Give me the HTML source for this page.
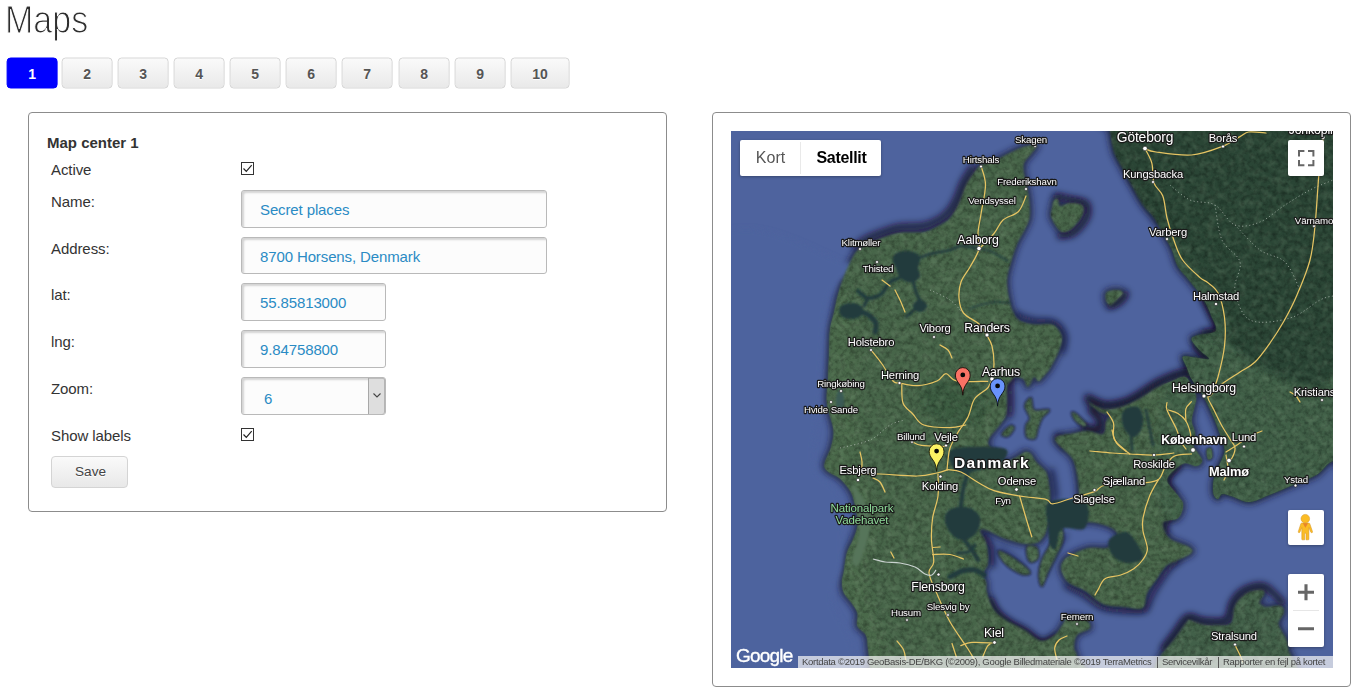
<!DOCTYPE html>
<html lang="da">
<head>
<meta charset="utf-8">
<title>Maps</title>
<style>
html,body{margin:0;padding:0;background:#fff;}
body{width:1365px;height:699px;position:relative;overflow:hidden;font-family:"Liberation Sans",sans-serif;font-size:15px;color:#333;}
.abs{position:absolute;white-space:nowrap;}
h1{position:absolute;left:4.5px;top:-2.5px;margin:0;font-weight:normal;font-size:38px;line-height:44px;color:#2e2e2e;transform-origin:0 0;transform:scaleX(.895);-webkit-text-stroke:1.1px #fff;}
.tab{position:absolute;transform:translate(-.4px,.5px);top:57px;height:29px;width:49px;border:1px solid #d6d6d6;border-radius:4px;background:linear-gradient(#fafafa,#e9e9e9);color:#555;font-weight:bold;font-size:14px;line-height:30px;text-align:center;text-shadow:0 1px 0 #fff;}
.tab.on{background:#0000fe;border-color:#0000fe;color:#fff;text-shadow:none;}
.box{position:absolute;border:1px solid #8c8c8c;border-radius:4px;box-sizing:border-box;}
.lbl{position:absolute;left:51px;font-size:15px;letter-spacing:-.08px;line-height:20px;color:#333;white-space:nowrap;}
.inp{position:absolute;left:241px;height:37px;box-sizing:border-box;border:1px solid #b9b9b9;border-radius:3px;background:#fcfcfc;box-shadow:inset 2px 2px 2px rgba(0,0,0,.16);color:#2a8bc4;font-size:15px;letter-spacing:-.12px;line-height:37px;padding-left:18px;white-space:nowrap;}
.chk{position:absolute;left:241px;width:11px;height:11px;border:1px solid #333;background:#fff;}
.chk svg{position:absolute;left:0;top:0;}
.btn{position:absolute;left:51px;top:456px;width:75px;height:30px;border:1px solid #d4d4d4;border-radius:4px;background:linear-gradient(#fafafa,#e8e8e8);color:#444;font-size:13.6px;line-height:30px;text-align:center;text-indent:2px;text-shadow:0 1px 0 #fff;}
#map{position:absolute;left:731px;top:131px;width:602px;height:537px;overflow:hidden;background:#4e639e;}
.ctl{position:absolute;background:#fff;border-radius:2px;box-shadow:0 1px 3px rgba(0,0,0,.3);}
</style>
</head>
<body>
<h1>Maps</h1>

<div class="tab on" style="left:7px">1</div>
<div class="tab" style="left:62px">2</div>
<div class="tab" style="left:118px">3</div>
<div class="tab" style="left:174px">4</div>
<div class="tab" style="left:230px">5</div>
<div class="tab" style="left:286px">6</div>
<div class="tab" style="left:342px">7</div>
<div class="tab" style="left:399px">8</div>
<div class="tab" style="left:455px">9</div>
<div class="tab" style="left:511px;width:57px">10</div>

<div class="box" style="left:28px;top:112px;width:639px;height:400px"></div>
<div class="abs" style="left:47px;top:132.5px;font-weight:bold;font-size:15px;line-height:20px;color:#333">Map center 1</div>

<div class="lbl" style="top:160px">Active</div>
<div class="chk" style="top:162px"><svg width="11" height="11" viewBox="0 0 11 11"><path d="M1.5 5.5 L4.3 8.3 L9.7 2.2" fill="none" stroke="#222" stroke-width="1.2"/></svg></div>

<div class="lbl" style="top:192px">Name:</div>
<div class="inp" style="top:190px;width:306px;height:38px">Secret places</div>

<div class="lbl" style="top:239px">Address:</div>
<div class="inp" style="top:237px;width:306px">8700 Horsens, Denmark</div>

<div class="lbl" style="top:285px">lat:</div>
<div class="inp" style="top:283px;width:145px;height:38px">55.85813000</div>

<div class="lbl" style="top:332px">lng:</div>
<div class="inp" style="top:330px;width:145px;height:38px">9.84758800</div>

<div class="lbl" style="top:379px">Zoom:</div>
<div class="inp" style="top:377px;width:145px;height:38px;padding-left:22px;line-height:41px">6</div>
<div class="abs" style="left:368px;top:378px;width:16px;height:36px;background:#dedede;border-left:1px solid #a8a8a8;border-radius:0 2px 2px 0;box-shadow:inset -1px 0 0 #b4b4b4,inset 0 1px 0 #bdbdbd"><svg width="16" height="35" viewBox="0 0 16 35"><path d="M4.5 15.5 L8 19 L11.5 15.5" fill="none" stroke="#444" stroke-width="1.1"/></svg></div>

<div class="lbl" style="top:426px">Show labels</div>
<div class="chk" style="top:428px"><svg width="11" height="11" viewBox="0 0 11 11"><path d="M1.5 5.5 L4.3 8.3 L9.7 2.2" fill="none" stroke="#222" stroke-width="1.2"/></svg></div>

<div class="btn">Save</div>

<div class="box" style="left:712px;top:112px;width:639px;height:575px"></div>

<div id="map">
<svg width="602" height="537" viewBox="731 131 602 537" style="position:absolute;left:0;top:0;display:block">
<defs>
<filter id="halo" filterUnits="userSpaceOnUse" x="700" y="100" width="680" height="620"><feGaussianBlur stdDeviation="3.4"/></filter>
<filter id="soft" filterUnits="userSpaceOnUse" x="700" y="100" width="680" height="620"><feGaussianBlur stdDeviation="1.2"/></filter>
<filter id="soft2" filterUnits="userSpaceOnUse" x="700" y="100" width="680" height="620"><feGaussianBlur stdDeviation="2.5"/></filter>
<filter id="soft3" filterUnits="userSpaceOnUse" x="700" y="100" width="680" height="620"><feGaussianBlur stdDeviation="3.3"/></filter>
<filter id="tex" x="0" y="0" width="100%" height="100%">
<feTurbulence type="fractalNoise" baseFrequency="0.22" numOctaves="3" seed="7" result="n"/>
<feColorMatrix in="n" type="matrix" values="0 0 0 0 0  0 0 0 0 0  0 0 0 0 0  1.6 0 0 0 -0.62" result="a"/>
<feComposite in="a" in2="SourceGraphic" operator="in"/>
</filter>
<filter id="tex2" x="0" y="0" width="100%" height="100%">
<feTurbulence type="fractalNoise" baseFrequency="0.13" numOctaves="2" seed="23" result="n"/>
<feColorMatrix in="n" type="matrix" values="0 0 0 0 0.55  0 0 0 0 0.75  0 0 0 0 0.5  0 1.5 0 0 -0.62" result="a"/>
<feComposite in="a" in2="SourceGraphic" operator="in"/>
</filter>
<clipPath id="landclip">
<path d="M1037.0 145.0 C1038.0 146.2 1033.2 151.0 1031.0 154.0 C1028.8 157.0 1025.2 159.7 1024.0 163.0 C1022.8 166.3 1023.5 170.0 1024.0 174.0 C1024.5 178.0 1026.1 182.2 1027.0 187.0 C1027.9 191.8 1029.1 197.8 1029.5 203.0 C1029.9 208.2 1030.4 213.3 1029.5 218.0 C1028.6 222.7 1026.1 226.7 1024.0 231.0 C1021.9 235.3 1019.2 238.8 1017.0 244.0 C1014.8 249.2 1012.7 256.0 1011.0 262.0 C1009.3 268.0 1007.3 274.0 1007.0 280.0 C1006.7 286.0 1008.0 292.7 1009.0 298.0 C1010.0 303.3 1011.2 308.2 1013.0 312.0 C1014.8 315.8 1016.3 318.9 1020.0 321.0 C1023.7 323.1 1029.7 323.9 1035.0 324.5 C1040.3 325.1 1047.8 323.2 1052.0 324.5 C1056.2 325.8 1058.3 329.2 1060.0 332.0 C1061.7 334.8 1062.3 337.5 1062.0 341.0 C1061.7 344.5 1059.4 349.5 1058.0 353.0 C1056.6 356.5 1055.0 359.2 1053.5 362.0 C1052.0 364.8 1050.8 367.5 1049.0 370.0 C1047.2 372.5 1044.8 375.1 1043.0 377.0 C1041.2 378.9 1040.0 381.5 1038.5 381.5 C1037.0 381.5 1035.8 376.1 1034.0 377.0 C1032.2 377.9 1029.8 386.7 1028.0 387.0 C1026.2 387.3 1025.7 380.7 1023.5 379.0 C1021.3 377.3 1017.1 376.7 1015.0 377.0 C1012.9 377.3 1012.3 379.5 1011.0 381.0 C1009.7 382.5 1007.7 382.8 1007.0 386.0 C1006.3 389.2 1007.2 395.2 1007.0 400.0 C1006.8 404.8 1007.3 410.7 1006.0 415.0 C1004.7 419.3 1001.7 422.3 999.0 426.0 C996.3 429.7 991.7 433.7 990.0 437.0 C988.3 440.3 986.8 442.0 989.0 446.0 C991.2 450.0 998.7 459.0 1003.0 461.0 C1007.3 463.0 1011.3 459.5 1015.0 458.0 C1018.7 456.5 1022.3 452.7 1025.0 452.0 C1027.7 451.3 1029.2 452.3 1031.0 454.0 C1032.8 455.7 1033.5 459.0 1036.0 462.0 C1038.5 465.0 1043.8 468.2 1046.0 472.0 C1048.2 475.8 1048.3 480.3 1049.0 485.0 C1049.7 489.7 1050.2 493.2 1050.0 500.0 C1049.8 506.8 1049.7 519.2 1048.0 526.0 C1046.3 532.8 1043.5 538.0 1040.0 541.0 C1036.5 544.0 1031.5 544.0 1027.0 544.0 C1022.5 544.0 1017.3 542.2 1013.0 541.0 C1008.7 539.8 1005.4 538.8 1001.0 537.0 C996.6 535.2 990.0 531.0 986.5 530.0 C983.0 529.0 980.0 528.7 980.0 531.0 C980.0 533.3 985.2 538.7 986.5 544.0 C987.8 549.3 988.6 558.0 988.0 563.0 C987.4 568.0 983.3 570.8 983.0 574.0 C982.7 577.2 985.3 578.8 986.0 582.0 C986.7 585.2 985.7 588.3 987.0 593.0 C988.3 597.7 990.7 605.3 994.0 610.0 C997.3 614.7 1002.0 617.7 1007.0 621.0 C1012.0 624.3 1018.3 626.7 1024.0 630.0 C1029.7 633.3 1035.8 640.2 1041.0 641.0 C1046.2 641.8 1051.3 637.8 1055.0 635.0 C1058.7 632.2 1060.8 627.0 1063.0 624.0 C1065.2 621.0 1064.3 617.8 1068.0 617.0 C1071.7 616.2 1081.3 617.2 1085.0 619.0 C1088.7 620.8 1091.3 625.3 1090.0 628.0 C1088.7 630.7 1079.7 631.7 1077.0 635.0 C1074.3 638.3 1074.0 644.3 1074.0 648.0 C1074.0 651.7 1076.3 650.0 1077.0 657.0 C1077.7 664.0 1112.5 684.5 1078.0 690.0 C1043.5 695.5 904.7 693.7 870.0 690.0 C835.3 686.3 870.3 675.0 870.0 668.0 C869.7 661.0 868.7 653.5 868.0 648.0 C867.3 642.5 867.8 638.7 866.0 635.0 C864.2 631.3 858.9 629.7 857.5 626.0 C856.1 622.3 858.6 617.0 857.5 613.0 C856.4 609.0 853.2 605.3 851.0 602.0 C848.8 598.7 845.5 596.3 844.0 593.0 C842.5 589.7 842.0 585.7 842.0 582.0 C842.0 578.3 843.2 575.8 844.0 571.0 C844.8 566.2 845.5 558.2 847.0 553.0 C848.5 547.8 851.2 544.7 853.0 540.0 C854.8 535.3 857.3 530.5 857.7 525.0 C858.1 519.5 856.6 512.5 855.5 507.0 C854.4 501.5 853.6 496.8 851.0 492.0 C848.4 487.2 844.4 482.6 840.0 478.5 C835.6 474.4 826.2 472.5 824.7 467.4 C823.2 462.2 829.5 453.8 831.0 447.6 C832.5 441.4 834.2 437.4 833.5 430.0 C832.8 422.6 827.9 411.5 827.0 403.0 C826.1 394.5 827.7 386.7 828.0 379.0 C828.3 371.3 828.7 365.2 829.0 357.0 C829.3 348.8 829.2 337.3 830.0 330.0 C830.8 322.7 832.7 318.8 834.0 313.0 C835.3 307.2 836.3 301.2 838.0 295.0 C839.7 288.8 841.2 282.9 844.0 276.0 C846.8 269.1 851.7 258.5 855.0 253.5 C858.3 248.5 860.5 248.2 864.0 246.0 C867.5 243.8 870.3 242.7 876.0 240.5 C881.7 238.3 890.0 234.4 898.0 233.0 C906.0 231.6 917.2 233.2 924.0 232.0 C930.8 230.8 934.7 227.9 939.0 225.6 C943.3 223.3 946.7 221.8 950.0 218.0 C953.3 214.2 956.3 208.5 959.0 203.0 C961.7 197.5 963.4 190.2 966.0 185.0 C968.6 179.8 972.0 175.3 974.5 172.0 C977.0 168.7 977.8 166.8 981.0 165.0 C984.2 163.2 988.8 163.2 994.0 161.0 C999.2 158.8 1006.8 154.4 1012.0 152.0 C1017.2 149.6 1020.8 147.7 1025.0 146.5 C1029.2 145.3 1036.0 143.8 1037.0 145.0Z"/>
<path d="M1054.0 200.0 C1055.0 198.5 1057.0 198.0 1058.0 199.0 C1059.0 200.0 1058.0 205.3 1060.0 206.0 C1062.0 206.7 1066.3 203.2 1070.0 203.0 C1073.7 202.8 1079.8 203.3 1082.0 205.0 C1084.2 206.7 1083.7 210.2 1083.0 213.0 C1082.3 215.8 1080.2 219.2 1078.0 222.0 C1075.8 224.8 1072.7 228.3 1070.0 230.0 C1067.3 231.7 1064.3 232.7 1062.0 232.0 C1059.7 231.3 1057.8 228.7 1056.0 226.0 C1054.2 223.3 1051.7 219.0 1051.0 216.0 C1050.3 213.0 1051.5 210.7 1052.0 208.0 C1052.5 205.3 1053.0 201.5 1054.0 200.0Z"/>
<path d="M1107.0 292.0 C1109.0 290.3 1115.3 289.8 1118.0 290.0 C1120.7 290.2 1123.2 291.3 1123.0 293.0 C1122.8 294.7 1119.2 298.0 1117.0 300.0 C1114.8 302.0 1111.8 305.0 1110.0 305.0 C1108.2 305.0 1106.5 302.2 1106.0 300.0 C1105.5 297.8 1105.0 293.7 1107.0 292.0Z"/>
<path d="M1108.0 110.0 C1149.7 106.5 1318.0 51.5 1360.0 110.0 C1402.0 168.5 1364.5 402.5 1360.0 461.0 C1355.5 519.5 1340.2 458.7 1333.0 461.0 C1325.8 463.3 1323.7 470.6 1317.0 474.6 C1310.3 478.6 1301.0 481.6 1293.0 485.0 C1285.0 488.4 1276.3 492.2 1269.0 495.0 C1261.7 497.8 1255.2 501.8 1249.0 502.0 C1242.8 502.2 1236.0 497.3 1231.5 496.0 C1227.0 494.7 1224.2 493.5 1222.0 494.0 C1219.8 494.5 1219.4 499.0 1218.0 499.0 C1216.6 499.0 1214.2 497.0 1213.5 494.0 C1212.8 491.0 1212.8 485.3 1213.5 481.0 C1214.2 476.7 1216.2 472.8 1218.0 468.0 C1219.8 463.2 1223.8 456.7 1224.5 452.0 C1225.2 447.3 1222.8 443.0 1222.0 440.0 C1221.2 437.0 1221.4 437.8 1220.0 434.0 C1218.6 430.2 1215.7 422.2 1213.5 417.0 C1211.3 411.8 1208.8 406.8 1207.0 403.0 C1205.2 399.2 1205.1 398.5 1202.5 394.5 C1199.9 390.5 1194.1 383.4 1191.5 379.0 C1188.9 374.6 1188.5 371.7 1187.0 368.0 C1185.5 364.3 1181.8 358.8 1182.6 357.0 C1183.3 355.2 1187.1 356.7 1191.5 357.0 C1195.9 357.3 1207.6 360.1 1209.0 359.0 C1210.4 357.9 1202.9 353.8 1200.0 350.5 C1197.1 347.2 1191.8 342.1 1191.5 339.5 C1191.2 336.9 1194.0 336.4 1198.0 335.0 C1202.0 333.6 1213.5 334.3 1215.7 331.0 C1217.9 327.7 1213.2 320.6 1211.0 315.0 C1208.8 309.4 1206.2 303.4 1202.5 297.6 C1198.8 291.8 1193.1 285.2 1189.0 280.0 C1184.9 274.8 1180.9 271.8 1178.0 266.6 C1175.1 261.4 1174.1 254.5 1171.6 249.0 C1169.1 243.5 1165.9 238.7 1163.0 233.5 C1160.1 228.3 1157.3 222.8 1154.0 218.0 C1150.7 213.2 1146.3 209.8 1143.0 205.0 C1139.7 200.2 1137.3 195.4 1134.0 189.5 C1130.7 183.6 1126.3 175.8 1123.0 169.6 C1119.7 163.3 1116.2 158.4 1114.0 152.0 C1111.8 145.6 1111.0 138.0 1110.0 131.0 C1109.0 124.0 1066.3 113.5 1108.0 110.0Z"/>
<path d="M1088.0 402.0 C1088.5 401.5 1097.5 408.2 1103.0 409.0 C1108.5 409.8 1115.0 408.7 1121.0 407.0 C1127.0 405.3 1133.2 402.2 1139.0 399.0 C1144.8 395.8 1150.5 391.0 1156.0 388.0 C1161.5 385.0 1167.2 382.8 1172.0 381.0 C1176.8 379.2 1181.8 376.2 1185.0 377.0 C1188.2 377.8 1189.7 382.7 1191.5 386.0 C1193.3 389.3 1195.6 393.3 1196.0 397.0 C1196.4 400.7 1194.8 404.0 1194.0 408.0 C1193.2 412.0 1191.3 416.7 1191.5 421.0 C1191.7 425.3 1194.8 430.0 1195.0 434.0 C1195.2 438.0 1192.7 442.0 1193.0 445.0 C1193.3 448.0 1195.5 449.3 1197.0 452.0 C1198.5 454.7 1202.2 458.7 1202.0 461.0 C1201.8 463.3 1198.8 465.7 1196.0 466.0 C1193.2 466.3 1188.7 462.3 1185.0 463.0 C1181.3 463.7 1177.0 467.0 1174.0 470.0 C1171.0 473.0 1166.3 476.7 1167.0 481.0 C1167.7 485.3 1175.3 492.0 1178.0 496.0 C1180.7 500.0 1183.0 501.3 1183.0 505.0 C1183.0 508.7 1181.3 515.1 1178.0 518.0 C1174.7 520.9 1164.5 519.2 1163.0 522.5 C1161.5 525.8 1164.7 533.9 1169.0 538.0 C1173.3 542.1 1185.2 544.5 1189.0 547.0 C1192.8 549.5 1193.3 550.8 1191.5 553.0 C1189.7 555.2 1182.2 557.8 1178.0 560.0 C1173.8 562.2 1169.7 562.7 1166.0 566.0 C1162.3 569.3 1159.2 575.5 1156.0 580.0 C1152.8 584.5 1149.2 588.3 1147.0 593.0 C1144.8 597.7 1146.3 605.7 1142.6 608.0 C1138.9 610.3 1131.6 607.7 1125.0 607.0 C1118.4 606.3 1109.6 606.7 1103.0 604.0 C1096.4 601.3 1091.3 594.7 1085.5 591.0 C1079.7 587.3 1072.1 585.7 1068.0 582.0 C1063.9 578.3 1061.7 572.7 1061.0 569.0 C1060.3 565.3 1062.5 562.2 1064.0 560.0 C1065.5 557.8 1065.9 557.5 1070.0 555.5 C1074.1 553.5 1082.5 549.2 1088.7 548.0 C1094.9 546.8 1102.5 549.0 1107.0 548.0 C1111.5 547.0 1114.2 544.2 1116.0 542.0 C1117.8 539.8 1118.7 537.3 1118.0 535.0 C1117.3 532.7 1115.5 530.0 1112.0 528.0 C1108.5 526.0 1101.8 524.0 1097.0 523.0 C1092.2 522.0 1086.2 521.8 1083.0 522.0 C1079.8 522.2 1079.0 525.2 1078.0 524.0 C1077.0 522.8 1076.8 520.0 1077.0 515.0 C1077.2 510.0 1079.0 500.8 1079.0 494.0 C1079.0 487.2 1078.2 480.0 1077.0 474.0 C1075.8 468.0 1075.7 463.8 1072.0 458.0 C1068.3 452.2 1054.5 443.2 1055.0 439.0 C1055.5 434.8 1069.5 434.3 1075.0 433.0 C1080.5 431.7 1083.3 430.8 1088.0 431.0 C1092.7 431.2 1100.0 435.5 1103.0 434.0 C1106.0 432.5 1104.8 425.2 1106.0 422.0 C1107.2 418.8 1111.0 416.7 1110.0 415.0 C1109.0 413.3 1103.7 414.2 1100.0 412.0 C1096.3 409.8 1087.5 402.5 1088.0 402.0Z"/>
<path d="M1061.0 526.0 C1062.2 527.3 1063.8 535.0 1063.0 540.0 C1062.2 545.0 1058.5 550.7 1056.0 556.0 C1053.5 561.3 1050.3 567.0 1048.0 572.0 C1045.7 577.0 1043.5 585.5 1042.0 586.0 C1040.5 586.5 1039.0 579.3 1039.0 575.0 C1039.0 570.7 1040.2 565.0 1042.0 560.0 C1043.8 555.0 1047.7 549.7 1050.0 545.0 C1052.3 540.3 1054.2 535.2 1056.0 532.0 C1057.8 528.8 1059.8 524.7 1061.0 526.0Z"/>
<path d="M1028.0 546.0 C1029.7 544.8 1035.3 546.0 1037.0 548.0 C1038.7 550.0 1039.0 555.7 1038.0 558.0 C1037.0 560.3 1032.8 562.5 1031.0 562.0 C1029.2 561.5 1027.5 557.7 1027.0 555.0 C1026.5 552.3 1026.3 547.2 1028.0 546.0Z"/>
<path d="M999.0 551.0 C1000.5 550.7 1005.8 553.5 1010.0 556.0 C1014.2 558.5 1020.7 563.2 1024.0 566.0 C1027.3 568.8 1030.3 571.7 1030.0 573.0 C1029.7 574.3 1025.7 575.2 1022.0 574.0 C1018.3 572.8 1011.5 568.7 1008.0 566.0 C1004.5 563.3 1002.5 560.5 1001.0 558.0 C999.5 555.5 997.5 551.3 999.0 551.0Z"/>
<path d="M1031.0 398.0 C1032.5 398.7 1031.0 408.0 1034.0 410.0 C1037.0 412.0 1047.7 408.7 1049.0 410.0 C1050.3 411.3 1043.8 415.0 1042.0 418.0 C1040.2 421.0 1039.2 424.7 1038.0 428.0 C1036.8 431.3 1036.8 436.5 1035.0 438.0 C1033.2 439.5 1028.5 439.0 1027.0 437.0 C1025.5 435.0 1025.5 429.2 1026.0 426.0 C1026.5 422.8 1030.2 421.3 1030.0 418.0 C1029.8 414.7 1024.8 409.3 1025.0 406.0 C1025.2 402.7 1029.5 397.3 1031.0 398.0Z"/>
<path d="M1072.0 413.0 C1072.2 412.0 1073.7 412.2 1076.0 414.0 C1078.3 415.8 1084.8 422.0 1086.0 424.0 C1087.2 426.0 1084.8 426.7 1083.0 426.0 C1081.2 425.3 1076.8 422.2 1075.0 420.0 C1073.2 417.8 1071.8 414.0 1072.0 413.0Z"/>
<path d="M1002.0 434.0 C1002.3 432.3 1008.0 427.0 1010.0 426.0 C1012.0 425.0 1014.3 426.3 1014.0 428.0 C1013.7 429.7 1010.0 435.0 1008.0 436.0 C1006.0 437.0 1001.7 435.7 1002.0 434.0Z"/>
<path d="M1207.0 450.0 C1207.5 448.3 1210.2 447.8 1211.0 449.0 C1211.8 450.2 1212.5 455.3 1212.0 457.0 C1211.5 458.7 1208.8 460.2 1208.0 459.0 C1207.2 457.8 1206.5 451.7 1207.0 450.0Z"/>
<path d="M1155.0 690.0 C1132.5 686.3 1154.1 673.7 1155.0 668.0 C1155.9 662.3 1157.2 660.9 1160.5 656.0 C1163.8 651.1 1170.2 644.5 1174.6 638.7 C1179.0 632.9 1184.4 624.5 1187.0 621.4 C1189.6 618.3 1187.3 619.5 1190.0 620.0 C1192.7 620.5 1198.2 623.7 1203.0 624.5 C1207.8 625.3 1214.0 625.2 1218.7 625.0 C1223.4 624.8 1228.4 626.0 1231.0 623.0 C1233.6 620.0 1232.8 611.2 1234.4 607.0 C1236.0 602.8 1238.1 600.4 1240.7 597.8 C1243.3 595.2 1246.3 592.8 1250.0 591.5 C1253.7 590.2 1260.4 589.5 1262.7 590.0 C1265.0 590.5 1264.5 592.5 1264.0 594.6 C1263.5 596.7 1259.3 600.4 1259.6 602.5 C1259.9 604.6 1262.5 606.5 1265.9 607.0 C1269.3 607.5 1277.0 604.8 1280.0 605.6 C1283.0 606.4 1284.2 609.1 1284.0 612.0 C1283.8 614.9 1278.9 619.9 1278.5 623.0 C1278.1 626.1 1280.3 628.2 1281.6 630.8 C1282.8 633.4 1284.9 635.8 1286.0 638.7 C1287.1 641.6 1287.3 639.5 1288.0 648.0 C1288.7 656.5 1312.2 683.0 1290.0 690.0 C1267.8 697.0 1177.5 693.7 1155.0 690.0Z"/>
</clipPath></defs>
<rect x="731" y="131" width="602" height="537" fill="#4e639e"/>
<g filter="url(#halo)" fill="#15142e" stroke="#15142e" stroke-width="5.5" stroke-linejoin="round" opacity=".72">
<path d="M1037.0 145.0 C1038.0 146.2 1033.2 151.0 1031.0 154.0 C1028.8 157.0 1025.2 159.7 1024.0 163.0 C1022.8 166.3 1023.5 170.0 1024.0 174.0 C1024.5 178.0 1026.1 182.2 1027.0 187.0 C1027.9 191.8 1029.1 197.8 1029.5 203.0 C1029.9 208.2 1030.4 213.3 1029.5 218.0 C1028.6 222.7 1026.1 226.7 1024.0 231.0 C1021.9 235.3 1019.2 238.8 1017.0 244.0 C1014.8 249.2 1012.7 256.0 1011.0 262.0 C1009.3 268.0 1007.3 274.0 1007.0 280.0 C1006.7 286.0 1008.0 292.7 1009.0 298.0 C1010.0 303.3 1011.2 308.2 1013.0 312.0 C1014.8 315.8 1016.3 318.9 1020.0 321.0 C1023.7 323.1 1029.7 323.9 1035.0 324.5 C1040.3 325.1 1047.8 323.2 1052.0 324.5 C1056.2 325.8 1058.3 329.2 1060.0 332.0 C1061.7 334.8 1062.3 337.5 1062.0 341.0 C1061.7 344.5 1059.4 349.5 1058.0 353.0 C1056.6 356.5 1055.0 359.2 1053.5 362.0 C1052.0 364.8 1050.8 367.5 1049.0 370.0 C1047.2 372.5 1044.8 375.1 1043.0 377.0 C1041.2 378.9 1040.0 381.5 1038.5 381.5 C1037.0 381.5 1035.8 376.1 1034.0 377.0 C1032.2 377.9 1029.8 386.7 1028.0 387.0 C1026.2 387.3 1025.7 380.7 1023.5 379.0 C1021.3 377.3 1017.1 376.7 1015.0 377.0 C1012.9 377.3 1012.3 379.5 1011.0 381.0 C1009.7 382.5 1007.7 382.8 1007.0 386.0 C1006.3 389.2 1007.2 395.2 1007.0 400.0 C1006.8 404.8 1007.3 410.7 1006.0 415.0 C1004.7 419.3 1001.7 422.3 999.0 426.0 C996.3 429.7 991.7 433.7 990.0 437.0 C988.3 440.3 986.8 442.0 989.0 446.0 C991.2 450.0 998.7 459.0 1003.0 461.0 C1007.3 463.0 1011.3 459.5 1015.0 458.0 C1018.7 456.5 1022.3 452.7 1025.0 452.0 C1027.7 451.3 1029.2 452.3 1031.0 454.0 C1032.8 455.7 1033.5 459.0 1036.0 462.0 C1038.5 465.0 1043.8 468.2 1046.0 472.0 C1048.2 475.8 1048.3 480.3 1049.0 485.0 C1049.7 489.7 1050.2 493.2 1050.0 500.0 C1049.8 506.8 1049.7 519.2 1048.0 526.0 C1046.3 532.8 1043.5 538.0 1040.0 541.0 C1036.5 544.0 1031.5 544.0 1027.0 544.0 C1022.5 544.0 1017.3 542.2 1013.0 541.0 C1008.7 539.8 1005.4 538.8 1001.0 537.0 C996.6 535.2 990.0 531.0 986.5 530.0 C983.0 529.0 980.0 528.7 980.0 531.0 C980.0 533.3 985.2 538.7 986.5 544.0 C987.8 549.3 988.6 558.0 988.0 563.0 C987.4 568.0 983.3 570.8 983.0 574.0 C982.7 577.2 985.3 578.8 986.0 582.0 C986.7 585.2 985.7 588.3 987.0 593.0 C988.3 597.7 990.7 605.3 994.0 610.0 C997.3 614.7 1002.0 617.7 1007.0 621.0 C1012.0 624.3 1018.3 626.7 1024.0 630.0 C1029.7 633.3 1035.8 640.2 1041.0 641.0 C1046.2 641.8 1051.3 637.8 1055.0 635.0 C1058.7 632.2 1060.8 627.0 1063.0 624.0 C1065.2 621.0 1064.3 617.8 1068.0 617.0 C1071.7 616.2 1081.3 617.2 1085.0 619.0 C1088.7 620.8 1091.3 625.3 1090.0 628.0 C1088.7 630.7 1079.7 631.7 1077.0 635.0 C1074.3 638.3 1074.0 644.3 1074.0 648.0 C1074.0 651.7 1076.3 650.0 1077.0 657.0 C1077.7 664.0 1112.5 684.5 1078.0 690.0 C1043.5 695.5 904.7 693.7 870.0 690.0 C835.3 686.3 870.3 675.0 870.0 668.0 C869.7 661.0 868.7 653.5 868.0 648.0 C867.3 642.5 867.8 638.7 866.0 635.0 C864.2 631.3 858.9 629.7 857.5 626.0 C856.1 622.3 858.6 617.0 857.5 613.0 C856.4 609.0 853.2 605.3 851.0 602.0 C848.8 598.7 845.5 596.3 844.0 593.0 C842.5 589.7 842.0 585.7 842.0 582.0 C842.0 578.3 843.2 575.8 844.0 571.0 C844.8 566.2 845.5 558.2 847.0 553.0 C848.5 547.8 851.2 544.7 853.0 540.0 C854.8 535.3 857.3 530.5 857.7 525.0 C858.1 519.5 856.6 512.5 855.5 507.0 C854.4 501.5 853.6 496.8 851.0 492.0 C848.4 487.2 844.4 482.6 840.0 478.5 C835.6 474.4 826.2 472.5 824.7 467.4 C823.2 462.2 829.5 453.8 831.0 447.6 C832.5 441.4 834.2 437.4 833.5 430.0 C832.8 422.6 827.9 411.5 827.0 403.0 C826.1 394.5 827.7 386.7 828.0 379.0 C828.3 371.3 828.7 365.2 829.0 357.0 C829.3 348.8 829.2 337.3 830.0 330.0 C830.8 322.7 832.7 318.8 834.0 313.0 C835.3 307.2 836.3 301.2 838.0 295.0 C839.7 288.8 841.2 282.9 844.0 276.0 C846.8 269.1 851.7 258.5 855.0 253.5 C858.3 248.5 860.5 248.2 864.0 246.0 C867.5 243.8 870.3 242.7 876.0 240.5 C881.7 238.3 890.0 234.4 898.0 233.0 C906.0 231.6 917.2 233.2 924.0 232.0 C930.8 230.8 934.7 227.9 939.0 225.6 C943.3 223.3 946.7 221.8 950.0 218.0 C953.3 214.2 956.3 208.5 959.0 203.0 C961.7 197.5 963.4 190.2 966.0 185.0 C968.6 179.8 972.0 175.3 974.5 172.0 C977.0 168.7 977.8 166.8 981.0 165.0 C984.2 163.2 988.8 163.2 994.0 161.0 C999.2 158.8 1006.8 154.4 1012.0 152.0 C1017.2 149.6 1020.8 147.7 1025.0 146.5 C1029.2 145.3 1036.0 143.8 1037.0 145.0Z"/>
<path d="M1054.0 200.0 C1055.0 198.5 1057.0 198.0 1058.0 199.0 C1059.0 200.0 1058.0 205.3 1060.0 206.0 C1062.0 206.7 1066.3 203.2 1070.0 203.0 C1073.7 202.8 1079.8 203.3 1082.0 205.0 C1084.2 206.7 1083.7 210.2 1083.0 213.0 C1082.3 215.8 1080.2 219.2 1078.0 222.0 C1075.8 224.8 1072.7 228.3 1070.0 230.0 C1067.3 231.7 1064.3 232.7 1062.0 232.0 C1059.7 231.3 1057.8 228.7 1056.0 226.0 C1054.2 223.3 1051.7 219.0 1051.0 216.0 C1050.3 213.0 1051.5 210.7 1052.0 208.0 C1052.5 205.3 1053.0 201.5 1054.0 200.0Z"/>
<path d="M1107.0 292.0 C1109.0 290.3 1115.3 289.8 1118.0 290.0 C1120.7 290.2 1123.2 291.3 1123.0 293.0 C1122.8 294.7 1119.2 298.0 1117.0 300.0 C1114.8 302.0 1111.8 305.0 1110.0 305.0 C1108.2 305.0 1106.5 302.2 1106.0 300.0 C1105.5 297.8 1105.0 293.7 1107.0 292.0Z"/>
<path d="M1108.0 110.0 C1149.7 106.5 1318.0 51.5 1360.0 110.0 C1402.0 168.5 1364.5 402.5 1360.0 461.0 C1355.5 519.5 1340.2 458.7 1333.0 461.0 C1325.8 463.3 1323.7 470.6 1317.0 474.6 C1310.3 478.6 1301.0 481.6 1293.0 485.0 C1285.0 488.4 1276.3 492.2 1269.0 495.0 C1261.7 497.8 1255.2 501.8 1249.0 502.0 C1242.8 502.2 1236.0 497.3 1231.5 496.0 C1227.0 494.7 1224.2 493.5 1222.0 494.0 C1219.8 494.5 1219.4 499.0 1218.0 499.0 C1216.6 499.0 1214.2 497.0 1213.5 494.0 C1212.8 491.0 1212.8 485.3 1213.5 481.0 C1214.2 476.7 1216.2 472.8 1218.0 468.0 C1219.8 463.2 1223.8 456.7 1224.5 452.0 C1225.2 447.3 1222.8 443.0 1222.0 440.0 C1221.2 437.0 1221.4 437.8 1220.0 434.0 C1218.6 430.2 1215.7 422.2 1213.5 417.0 C1211.3 411.8 1208.8 406.8 1207.0 403.0 C1205.2 399.2 1205.1 398.5 1202.5 394.5 C1199.9 390.5 1194.1 383.4 1191.5 379.0 C1188.9 374.6 1188.5 371.7 1187.0 368.0 C1185.5 364.3 1181.8 358.8 1182.6 357.0 C1183.3 355.2 1187.1 356.7 1191.5 357.0 C1195.9 357.3 1207.6 360.1 1209.0 359.0 C1210.4 357.9 1202.9 353.8 1200.0 350.5 C1197.1 347.2 1191.8 342.1 1191.5 339.5 C1191.2 336.9 1194.0 336.4 1198.0 335.0 C1202.0 333.6 1213.5 334.3 1215.7 331.0 C1217.9 327.7 1213.2 320.6 1211.0 315.0 C1208.8 309.4 1206.2 303.4 1202.5 297.6 C1198.8 291.8 1193.1 285.2 1189.0 280.0 C1184.9 274.8 1180.9 271.8 1178.0 266.6 C1175.1 261.4 1174.1 254.5 1171.6 249.0 C1169.1 243.5 1165.9 238.7 1163.0 233.5 C1160.1 228.3 1157.3 222.8 1154.0 218.0 C1150.7 213.2 1146.3 209.8 1143.0 205.0 C1139.7 200.2 1137.3 195.4 1134.0 189.5 C1130.7 183.6 1126.3 175.8 1123.0 169.6 C1119.7 163.3 1116.2 158.4 1114.0 152.0 C1111.8 145.6 1111.0 138.0 1110.0 131.0 C1109.0 124.0 1066.3 113.5 1108.0 110.0Z"/>
<path d="M1088.0 402.0 C1088.5 401.5 1097.5 408.2 1103.0 409.0 C1108.5 409.8 1115.0 408.7 1121.0 407.0 C1127.0 405.3 1133.2 402.2 1139.0 399.0 C1144.8 395.8 1150.5 391.0 1156.0 388.0 C1161.5 385.0 1167.2 382.8 1172.0 381.0 C1176.8 379.2 1181.8 376.2 1185.0 377.0 C1188.2 377.8 1189.7 382.7 1191.5 386.0 C1193.3 389.3 1195.6 393.3 1196.0 397.0 C1196.4 400.7 1194.8 404.0 1194.0 408.0 C1193.2 412.0 1191.3 416.7 1191.5 421.0 C1191.7 425.3 1194.8 430.0 1195.0 434.0 C1195.2 438.0 1192.7 442.0 1193.0 445.0 C1193.3 448.0 1195.5 449.3 1197.0 452.0 C1198.5 454.7 1202.2 458.7 1202.0 461.0 C1201.8 463.3 1198.8 465.7 1196.0 466.0 C1193.2 466.3 1188.7 462.3 1185.0 463.0 C1181.3 463.7 1177.0 467.0 1174.0 470.0 C1171.0 473.0 1166.3 476.7 1167.0 481.0 C1167.7 485.3 1175.3 492.0 1178.0 496.0 C1180.7 500.0 1183.0 501.3 1183.0 505.0 C1183.0 508.7 1181.3 515.1 1178.0 518.0 C1174.7 520.9 1164.5 519.2 1163.0 522.5 C1161.5 525.8 1164.7 533.9 1169.0 538.0 C1173.3 542.1 1185.2 544.5 1189.0 547.0 C1192.8 549.5 1193.3 550.8 1191.5 553.0 C1189.7 555.2 1182.2 557.8 1178.0 560.0 C1173.8 562.2 1169.7 562.7 1166.0 566.0 C1162.3 569.3 1159.2 575.5 1156.0 580.0 C1152.8 584.5 1149.2 588.3 1147.0 593.0 C1144.8 597.7 1146.3 605.7 1142.6 608.0 C1138.9 610.3 1131.6 607.7 1125.0 607.0 C1118.4 606.3 1109.6 606.7 1103.0 604.0 C1096.4 601.3 1091.3 594.7 1085.5 591.0 C1079.7 587.3 1072.1 585.7 1068.0 582.0 C1063.9 578.3 1061.7 572.7 1061.0 569.0 C1060.3 565.3 1062.5 562.2 1064.0 560.0 C1065.5 557.8 1065.9 557.5 1070.0 555.5 C1074.1 553.5 1082.5 549.2 1088.7 548.0 C1094.9 546.8 1102.5 549.0 1107.0 548.0 C1111.5 547.0 1114.2 544.2 1116.0 542.0 C1117.8 539.8 1118.7 537.3 1118.0 535.0 C1117.3 532.7 1115.5 530.0 1112.0 528.0 C1108.5 526.0 1101.8 524.0 1097.0 523.0 C1092.2 522.0 1086.2 521.8 1083.0 522.0 C1079.8 522.2 1079.0 525.2 1078.0 524.0 C1077.0 522.8 1076.8 520.0 1077.0 515.0 C1077.2 510.0 1079.0 500.8 1079.0 494.0 C1079.0 487.2 1078.2 480.0 1077.0 474.0 C1075.8 468.0 1075.7 463.8 1072.0 458.0 C1068.3 452.2 1054.5 443.2 1055.0 439.0 C1055.5 434.8 1069.5 434.3 1075.0 433.0 C1080.5 431.7 1083.3 430.8 1088.0 431.0 C1092.7 431.2 1100.0 435.5 1103.0 434.0 C1106.0 432.5 1104.8 425.2 1106.0 422.0 C1107.2 418.8 1111.0 416.7 1110.0 415.0 C1109.0 413.3 1103.7 414.2 1100.0 412.0 C1096.3 409.8 1087.5 402.5 1088.0 402.0Z"/>
<path d="M1155.0 690.0 C1132.5 686.3 1154.1 673.7 1155.0 668.0 C1155.9 662.3 1157.2 660.9 1160.5 656.0 C1163.8 651.1 1170.2 644.5 1174.6 638.7 C1179.0 632.9 1184.4 624.5 1187.0 621.4 C1189.6 618.3 1187.3 619.5 1190.0 620.0 C1192.7 620.5 1198.2 623.7 1203.0 624.5 C1207.8 625.3 1214.0 625.2 1218.7 625.0 C1223.4 624.8 1228.4 626.0 1231.0 623.0 C1233.6 620.0 1232.8 611.2 1234.4 607.0 C1236.0 602.8 1238.1 600.4 1240.7 597.8 C1243.3 595.2 1246.3 592.8 1250.0 591.5 C1253.7 590.2 1260.4 589.5 1262.7 590.0 C1265.0 590.5 1264.5 592.5 1264.0 594.6 C1263.5 596.7 1259.3 600.4 1259.6 602.5 C1259.9 604.6 1262.5 606.5 1265.9 607.0 C1269.3 607.5 1277.0 604.8 1280.0 605.6 C1283.0 606.4 1284.2 609.1 1284.0 612.0 C1283.8 614.9 1278.9 619.9 1278.5 623.0 C1278.1 626.1 1280.3 628.2 1281.6 630.8 C1282.8 633.4 1284.9 635.8 1286.0 638.7 C1287.1 641.6 1287.3 639.5 1288.0 648.0 C1288.7 656.5 1312.2 683.0 1290.0 690.0 C1267.8 697.0 1177.5 693.7 1155.0 690.0Z"/>
</g>
<g filter="url(#soft)" fill="#15142e" stroke="#15142e" stroke-width="3" stroke-linejoin="round" opacity=".6">
<path d="M1061.0 526.0 C1062.2 527.3 1063.8 535.0 1063.0 540.0 C1062.2 545.0 1058.5 550.7 1056.0 556.0 C1053.5 561.3 1050.3 567.0 1048.0 572.0 C1045.7 577.0 1043.5 585.5 1042.0 586.0 C1040.5 586.5 1039.0 579.3 1039.0 575.0 C1039.0 570.7 1040.2 565.0 1042.0 560.0 C1043.8 555.0 1047.7 549.7 1050.0 545.0 C1052.3 540.3 1054.2 535.2 1056.0 532.0 C1057.8 528.8 1059.8 524.7 1061.0 526.0Z"/>
<path d="M1028.0 546.0 C1029.7 544.8 1035.3 546.0 1037.0 548.0 C1038.7 550.0 1039.0 555.7 1038.0 558.0 C1037.0 560.3 1032.8 562.5 1031.0 562.0 C1029.2 561.5 1027.5 557.7 1027.0 555.0 C1026.5 552.3 1026.3 547.2 1028.0 546.0Z"/>
<path d="M999.0 551.0 C1000.5 550.7 1005.8 553.5 1010.0 556.0 C1014.2 558.5 1020.7 563.2 1024.0 566.0 C1027.3 568.8 1030.3 571.7 1030.0 573.0 C1029.7 574.3 1025.7 575.2 1022.0 574.0 C1018.3 572.8 1011.5 568.7 1008.0 566.0 C1004.5 563.3 1002.5 560.5 1001.0 558.0 C999.5 555.5 997.5 551.3 999.0 551.0Z"/>
<path d="M1031.0 398.0 C1032.5 398.7 1031.0 408.0 1034.0 410.0 C1037.0 412.0 1047.7 408.7 1049.0 410.0 C1050.3 411.3 1043.8 415.0 1042.0 418.0 C1040.2 421.0 1039.2 424.7 1038.0 428.0 C1036.8 431.3 1036.8 436.5 1035.0 438.0 C1033.2 439.5 1028.5 439.0 1027.0 437.0 C1025.5 435.0 1025.5 429.2 1026.0 426.0 C1026.5 422.8 1030.2 421.3 1030.0 418.0 C1029.8 414.7 1024.8 409.3 1025.0 406.0 C1025.2 402.7 1029.5 397.3 1031.0 398.0Z"/>
<path d="M1072.0 413.0 C1072.2 412.0 1073.7 412.2 1076.0 414.0 C1078.3 415.8 1084.8 422.0 1086.0 424.0 C1087.2 426.0 1084.8 426.7 1083.0 426.0 C1081.2 425.3 1076.8 422.2 1075.0 420.0 C1073.2 417.8 1071.8 414.0 1072.0 413.0Z"/>
<path d="M1002.0 434.0 C1002.3 432.3 1008.0 427.0 1010.0 426.0 C1012.0 425.0 1014.3 426.3 1014.0 428.0 C1013.7 429.7 1010.0 435.0 1008.0 436.0 C1006.0 437.0 1001.7 435.7 1002.0 434.0Z"/>
<path d="M1207.0 450.0 C1207.5 448.3 1210.2 447.8 1211.0 449.0 C1211.8 450.2 1212.5 455.3 1212.0 457.0 C1211.5 458.7 1208.8 460.2 1208.0 459.0 C1207.2 457.8 1206.5 451.7 1207.0 450.0Z"/>
</g>
<g filter="url(#soft3)" fill="none" stroke="#150c24" stroke-linecap="round">
<path d="M1088.0 398.0 C1090.8 399.2 1098.8 404.3 1105.0 405.0 C1111.2 405.7 1119.2 403.8 1125.0 402.0 C1130.8 400.2 1134.7 397.2 1140.0 394.0 C1145.3 390.8 1151.7 386.0 1157.0 383.0 C1162.3 380.0 1167.2 377.8 1172.0 376.0 C1176.8 374.2 1183.7 372.7 1186.0 372.0" stroke-width="7.2" opacity="0.95"/>
<path d="M1092.0 410.0 C1093.3 411.7 1099.0 416.7 1100.0 420.0 C1101.0 423.3 1100.5 428.7 1098.0 430.0 C1095.5 431.3 1087.2 428.3 1085.0 428.0" stroke-width="8.0" opacity="0.9"/>
<path d="M1206.0 300.0 C1207.3 302.5 1211.8 310.0 1214.0 315.0 C1216.2 320.0 1220.5 327.0 1219.0 330.0 C1217.5 333.0 1207.3 332.5 1205.0 333.0" stroke-width="7.2" opacity="0.95"/>
<path d="M1196.0 346.0 C1197.5 347.5 1202.3 352.7 1205.0 355.0 C1207.7 357.3 1210.8 359.2 1212.0 360.0" stroke-width="6.4" opacity="0.95"/>
<path d="M1186.0 362.0 C1186.7 364.2 1188.0 370.7 1190.0 375.0 C1192.0 379.3 1196.7 385.8 1198.0 388.0" stroke-width="4.0" opacity="0.7"/>
<path d="M1178.0 466.0 C1176.7 467.3 1172.0 471.0 1170.0 474.0 C1168.0 477.0 1165.7 481.0 1166.0 484.0 C1166.3 487.0 1171.0 490.7 1172.0 492.0" stroke-width="6.4" opacity="0.95"/>
<path d="M1170.0 518.0 C1169.0 519.0 1164.7 521.7 1164.0 524.0 C1163.3 526.3 1165.7 530.7 1166.0 532.0" stroke-width="5.6" opacity="0.9"/>
<path d="M1178.0 560.0 C1176.7 561.3 1173.0 564.3 1170.0 568.0 C1167.0 571.7 1163.0 577.3 1160.0 582.0 C1157.0 586.7 1154.3 591.3 1152.0 596.0 C1149.7 600.7 1147.0 607.7 1146.0 610.0" stroke-width="4.8" opacity="0.7"/>
<path d="M1066.0 586.0 C1069.2 587.7 1078.8 592.3 1085.0 596.0 C1091.2 599.7 1096.3 605.5 1103.0 608.0 C1109.7 610.5 1118.5 610.5 1125.0 611.0 C1131.5 611.5 1139.2 611.0 1142.0 611.0" stroke-width="4.8" opacity="0.7"/>
<path d="M990.0 600.0 C991.3 602.3 994.7 610.0 998.0 614.0 C1001.3 618.0 1005.3 620.8 1010.0 624.0 C1014.7 627.2 1020.7 629.7 1026.0 633.0 C1031.3 636.3 1037.0 643.2 1042.0 644.0 C1047.0 644.8 1053.7 639.0 1056.0 638.0" stroke-width="6.4" opacity="0.9"/>
<path d="M1164.0 648.0 C1166.0 645.3 1172.0 637.2 1176.0 632.0 C1180.0 626.8 1183.3 618.8 1188.0 617.0 C1192.7 615.2 1197.7 620.5 1204.0 621.0 C1210.3 621.5 1221.3 622.8 1226.0 620.0 C1230.7 617.2 1229.7 608.5 1232.0 604.0 C1234.3 599.5 1236.7 595.8 1240.0 593.0 C1243.3 590.2 1247.7 588.0 1252.0 587.0 C1256.3 586.0 1261.0 584.5 1266.0 587.0 C1271.0 589.5 1279.3 599.5 1282.0 602.0" stroke-width="6.4" opacity="0.9"/>
<path d="M1080.0 445.0 C1080.5 449.2 1082.2 461.7 1083.0 470.0 C1083.8 478.3 1084.7 490.8 1085.0 495.0" stroke-width="5.6" opacity="0.9"/>
<path d="M1058.0 436.0 L1064.0 446.0" stroke-width="5.6" opacity="0.8"/>
<path d="M856.0 246.0 C857.7 244.8 862.0 241.2 866.0 239.0 C870.0 236.8 874.3 235.0 880.0 233.0 C885.7 231.0 893.0 228.2 900.0 227.0 C907.0 225.8 915.7 227.2 922.0 226.0 C928.3 224.8 933.5 222.5 938.0 220.0 C942.5 217.5 945.8 214.7 949.0 211.0 C952.2 207.3 954.7 202.7 957.0 198.0 C959.3 193.3 960.5 188.0 963.0 183.0 C965.5 178.0 970.5 170.5 972.0 168.0" stroke-width="6.4" opacity="0.8"/>
<path d="M1056.0 196.0 C1058.3 196.5 1065.0 197.8 1070.0 199.0 C1075.0 200.2 1083.0 200.5 1086.0 203.0 C1089.0 205.5 1088.7 210.3 1088.0 214.0 C1087.3 217.7 1084.7 221.7 1082.0 225.0 C1079.3 228.3 1075.7 232.2 1072.0 234.0 C1068.3 235.8 1062.0 235.7 1060.0 236.0" stroke-width="5.6" opacity="0.9"/>
<path d="M1110.0 306.0 C1111.7 305.3 1117.3 304.0 1120.0 302.0 C1122.7 300.0 1125.0 295.3 1126.0 294.0" stroke-width="5.6" opacity="0.9"/>
<path d="M1017.0 314.0 C1020.0 315.0 1028.8 318.7 1035.0 320.0 C1041.2 321.3 1049.0 319.5 1054.0 322.0 C1059.0 324.5 1063.5 330.0 1065.0 335.0 C1066.5 340.0 1063.3 349.2 1063.0 352.0" stroke-width="4.0" opacity="0.7"/>
<path d="M1012.0 372.0 C1011.7 374.0 1010.2 379.3 1010.0 384.0 C1009.8 388.7 1011.0 394.8 1011.0 400.0 C1011.0 405.2 1010.2 412.5 1010.0 415.0" stroke-width="4.8" opacity="0.8"/>
<path d="M1052.0 470.0 C1052.5 472.5 1054.3 480.3 1055.0 485.0 C1055.7 489.7 1055.8 495.8 1056.0 498.0" stroke-width="4.0" opacity="0.7"/>
<path d="M985.0 536.0 C986.2 538.0 990.7 543.2 992.0 548.0 C993.3 552.8 992.8 562.2 993.0 565.0" stroke-width="4.8" opacity="0.7"/>
<path d="M1000.0 548.0 C1002.0 549.3 1008.0 552.7 1012.0 556.0 C1016.0 559.3 1022.0 566.0 1024.0 568.0" stroke-width="3.2" opacity="0.6"/>
<path d="M1046.0 574.0 C1046.7 571.7 1048.0 564.3 1050.0 560.0 C1052.0 555.7 1055.3 552.2 1058.0 548.0 C1060.7 543.8 1064.7 537.2 1066.0 535.0" stroke-width="3.2" opacity="0.6"/>
<path d="M1120.0 150.0 C1121.3 153.3 1125.0 163.7 1128.0 170.0 C1131.0 176.3 1134.7 182.3 1138.0 188.0 C1141.3 193.7 1144.7 198.7 1148.0 204.0 C1151.3 209.3 1156.3 217.3 1158.0 220.0" stroke-width="4.8" opacity="0.45"/>
</g>
<path d="M700.0 262.0 C724.3 189.0 823.3 258.2 846.0 262.0 C868.7 265.8 839.3 277.0 836.0 285.0 C832.7 293.0 828.7 290.8 826.0 310.0 C823.3 329.2 822.0 374.2 820.0 400.0 C818.0 425.8 811.0 449.2 814.0 465.0 C817.0 480.8 833.3 479.2 838.0 495.0 C842.7 510.8 843.0 542.5 842.0 560.0 C841.0 577.5 830.7 586.7 832.0 600.0 C833.3 613.3 846.0 623.3 850.0 640.0 C854.0 656.7 881.0 690.0 856.0 700.0 C831.0 710.0 726.0 773.0 700.0 700.0 C674.0 627.0 675.7 335.0 700.0 262.0Z" fill="#4e639e" filter="url(#soft2)"/>
<g filter="url(#soft)">
<path d="M1037.0 145.0 C1038.0 146.2 1033.2 151.0 1031.0 154.0 C1028.8 157.0 1025.2 159.7 1024.0 163.0 C1022.8 166.3 1023.5 170.0 1024.0 174.0 C1024.5 178.0 1026.1 182.2 1027.0 187.0 C1027.9 191.8 1029.1 197.8 1029.5 203.0 C1029.9 208.2 1030.4 213.3 1029.5 218.0 C1028.6 222.7 1026.1 226.7 1024.0 231.0 C1021.9 235.3 1019.2 238.8 1017.0 244.0 C1014.8 249.2 1012.7 256.0 1011.0 262.0 C1009.3 268.0 1007.3 274.0 1007.0 280.0 C1006.7 286.0 1008.0 292.7 1009.0 298.0 C1010.0 303.3 1011.2 308.2 1013.0 312.0 C1014.8 315.8 1016.3 318.9 1020.0 321.0 C1023.7 323.1 1029.7 323.9 1035.0 324.5 C1040.3 325.1 1047.8 323.2 1052.0 324.5 C1056.2 325.8 1058.3 329.2 1060.0 332.0 C1061.7 334.8 1062.3 337.5 1062.0 341.0 C1061.7 344.5 1059.4 349.5 1058.0 353.0 C1056.6 356.5 1055.0 359.2 1053.5 362.0 C1052.0 364.8 1050.8 367.5 1049.0 370.0 C1047.2 372.5 1044.8 375.1 1043.0 377.0 C1041.2 378.9 1040.0 381.5 1038.5 381.5 C1037.0 381.5 1035.8 376.1 1034.0 377.0 C1032.2 377.9 1029.8 386.7 1028.0 387.0 C1026.2 387.3 1025.7 380.7 1023.5 379.0 C1021.3 377.3 1017.1 376.7 1015.0 377.0 C1012.9 377.3 1012.3 379.5 1011.0 381.0 C1009.7 382.5 1007.7 382.8 1007.0 386.0 C1006.3 389.2 1007.2 395.2 1007.0 400.0 C1006.8 404.8 1007.3 410.7 1006.0 415.0 C1004.7 419.3 1001.7 422.3 999.0 426.0 C996.3 429.7 991.7 433.7 990.0 437.0 C988.3 440.3 986.8 442.0 989.0 446.0 C991.2 450.0 998.7 459.0 1003.0 461.0 C1007.3 463.0 1011.3 459.5 1015.0 458.0 C1018.7 456.5 1022.3 452.7 1025.0 452.0 C1027.7 451.3 1029.2 452.3 1031.0 454.0 C1032.8 455.7 1033.5 459.0 1036.0 462.0 C1038.5 465.0 1043.8 468.2 1046.0 472.0 C1048.2 475.8 1048.3 480.3 1049.0 485.0 C1049.7 489.7 1050.2 493.2 1050.0 500.0 C1049.8 506.8 1049.7 519.2 1048.0 526.0 C1046.3 532.8 1043.5 538.0 1040.0 541.0 C1036.5 544.0 1031.5 544.0 1027.0 544.0 C1022.5 544.0 1017.3 542.2 1013.0 541.0 C1008.7 539.8 1005.4 538.8 1001.0 537.0 C996.6 535.2 990.0 531.0 986.5 530.0 C983.0 529.0 980.0 528.7 980.0 531.0 C980.0 533.3 985.2 538.7 986.5 544.0 C987.8 549.3 988.6 558.0 988.0 563.0 C987.4 568.0 983.3 570.8 983.0 574.0 C982.7 577.2 985.3 578.8 986.0 582.0 C986.7 585.2 985.7 588.3 987.0 593.0 C988.3 597.7 990.7 605.3 994.0 610.0 C997.3 614.7 1002.0 617.7 1007.0 621.0 C1012.0 624.3 1018.3 626.7 1024.0 630.0 C1029.7 633.3 1035.8 640.2 1041.0 641.0 C1046.2 641.8 1051.3 637.8 1055.0 635.0 C1058.7 632.2 1060.8 627.0 1063.0 624.0 C1065.2 621.0 1064.3 617.8 1068.0 617.0 C1071.7 616.2 1081.3 617.2 1085.0 619.0 C1088.7 620.8 1091.3 625.3 1090.0 628.0 C1088.7 630.7 1079.7 631.7 1077.0 635.0 C1074.3 638.3 1074.0 644.3 1074.0 648.0 C1074.0 651.7 1076.3 650.0 1077.0 657.0 C1077.7 664.0 1112.5 684.5 1078.0 690.0 C1043.5 695.5 904.7 693.7 870.0 690.0 C835.3 686.3 870.3 675.0 870.0 668.0 C869.7 661.0 868.7 653.5 868.0 648.0 C867.3 642.5 867.8 638.7 866.0 635.0 C864.2 631.3 858.9 629.7 857.5 626.0 C856.1 622.3 858.6 617.0 857.5 613.0 C856.4 609.0 853.2 605.3 851.0 602.0 C848.8 598.7 845.5 596.3 844.0 593.0 C842.5 589.7 842.0 585.7 842.0 582.0 C842.0 578.3 843.2 575.8 844.0 571.0 C844.8 566.2 845.5 558.2 847.0 553.0 C848.5 547.8 851.2 544.7 853.0 540.0 C854.8 535.3 857.3 530.5 857.7 525.0 C858.1 519.5 856.6 512.5 855.5 507.0 C854.4 501.5 853.6 496.8 851.0 492.0 C848.4 487.2 844.4 482.6 840.0 478.5 C835.6 474.4 826.2 472.5 824.7 467.4 C823.2 462.2 829.5 453.8 831.0 447.6 C832.5 441.4 834.2 437.4 833.5 430.0 C832.8 422.6 827.9 411.5 827.0 403.0 C826.1 394.5 827.7 386.7 828.0 379.0 C828.3 371.3 828.7 365.2 829.0 357.0 C829.3 348.8 829.2 337.3 830.0 330.0 C830.8 322.7 832.7 318.8 834.0 313.0 C835.3 307.2 836.3 301.2 838.0 295.0 C839.7 288.8 841.2 282.9 844.0 276.0 C846.8 269.1 851.7 258.5 855.0 253.5 C858.3 248.5 860.5 248.2 864.0 246.0 C867.5 243.8 870.3 242.7 876.0 240.5 C881.7 238.3 890.0 234.4 898.0 233.0 C906.0 231.6 917.2 233.2 924.0 232.0 C930.8 230.8 934.7 227.9 939.0 225.6 C943.3 223.3 946.7 221.8 950.0 218.0 C953.3 214.2 956.3 208.5 959.0 203.0 C961.7 197.5 963.4 190.2 966.0 185.0 C968.6 179.8 972.0 175.3 974.5 172.0 C977.0 168.7 977.8 166.8 981.0 165.0 C984.2 163.2 988.8 163.2 994.0 161.0 C999.2 158.8 1006.8 154.4 1012.0 152.0 C1017.2 149.6 1020.8 147.7 1025.0 146.5 C1029.2 145.3 1036.0 143.8 1037.0 145.0Z" fill="#466549"/>
<path d="M1054.0 200.0 C1055.0 198.5 1057.0 198.0 1058.0 199.0 C1059.0 200.0 1058.0 205.3 1060.0 206.0 C1062.0 206.7 1066.3 203.2 1070.0 203.0 C1073.7 202.8 1079.8 203.3 1082.0 205.0 C1084.2 206.7 1083.7 210.2 1083.0 213.0 C1082.3 215.8 1080.2 219.2 1078.0 222.0 C1075.8 224.8 1072.7 228.3 1070.0 230.0 C1067.3 231.7 1064.3 232.7 1062.0 232.0 C1059.7 231.3 1057.8 228.7 1056.0 226.0 C1054.2 223.3 1051.7 219.0 1051.0 216.0 C1050.3 213.0 1051.5 210.7 1052.0 208.0 C1052.5 205.3 1053.0 201.5 1054.0 200.0Z" fill="#466549"/>
<path d="M1107.0 292.0 C1109.0 290.3 1115.3 289.8 1118.0 290.0 C1120.7 290.2 1123.2 291.3 1123.0 293.0 C1122.8 294.7 1119.2 298.0 1117.0 300.0 C1114.8 302.0 1111.8 305.0 1110.0 305.0 C1108.2 305.0 1106.5 302.2 1106.0 300.0 C1105.5 297.8 1105.0 293.7 1107.0 292.0Z" fill="#466549"/>
<path d="M1108.0 110.0 C1149.7 106.5 1318.0 51.5 1360.0 110.0 C1402.0 168.5 1364.5 402.5 1360.0 461.0 C1355.5 519.5 1340.2 458.7 1333.0 461.0 C1325.8 463.3 1323.7 470.6 1317.0 474.6 C1310.3 478.6 1301.0 481.6 1293.0 485.0 C1285.0 488.4 1276.3 492.2 1269.0 495.0 C1261.7 497.8 1255.2 501.8 1249.0 502.0 C1242.8 502.2 1236.0 497.3 1231.5 496.0 C1227.0 494.7 1224.2 493.5 1222.0 494.0 C1219.8 494.5 1219.4 499.0 1218.0 499.0 C1216.6 499.0 1214.2 497.0 1213.5 494.0 C1212.8 491.0 1212.8 485.3 1213.5 481.0 C1214.2 476.7 1216.2 472.8 1218.0 468.0 C1219.8 463.2 1223.8 456.7 1224.5 452.0 C1225.2 447.3 1222.8 443.0 1222.0 440.0 C1221.2 437.0 1221.4 437.8 1220.0 434.0 C1218.6 430.2 1215.7 422.2 1213.5 417.0 C1211.3 411.8 1208.8 406.8 1207.0 403.0 C1205.2 399.2 1205.1 398.5 1202.5 394.5 C1199.9 390.5 1194.1 383.4 1191.5 379.0 C1188.9 374.6 1188.5 371.7 1187.0 368.0 C1185.5 364.3 1181.8 358.8 1182.6 357.0 C1183.3 355.2 1187.1 356.7 1191.5 357.0 C1195.9 357.3 1207.6 360.1 1209.0 359.0 C1210.4 357.9 1202.9 353.8 1200.0 350.5 C1197.1 347.2 1191.8 342.1 1191.5 339.5 C1191.2 336.9 1194.0 336.4 1198.0 335.0 C1202.0 333.6 1213.5 334.3 1215.7 331.0 C1217.9 327.7 1213.2 320.6 1211.0 315.0 C1208.8 309.4 1206.2 303.4 1202.5 297.6 C1198.8 291.8 1193.1 285.2 1189.0 280.0 C1184.9 274.8 1180.9 271.8 1178.0 266.6 C1175.1 261.4 1174.1 254.5 1171.6 249.0 C1169.1 243.5 1165.9 238.7 1163.0 233.5 C1160.1 228.3 1157.3 222.8 1154.0 218.0 C1150.7 213.2 1146.3 209.8 1143.0 205.0 C1139.7 200.2 1137.3 195.4 1134.0 189.5 C1130.7 183.6 1126.3 175.8 1123.0 169.6 C1119.7 163.3 1116.2 158.4 1114.0 152.0 C1111.8 145.6 1111.0 138.0 1110.0 131.0 C1109.0 124.0 1066.3 113.5 1108.0 110.0Z" fill="#2c4436"/>
<path d="M1088.0 402.0 C1088.5 401.5 1097.5 408.2 1103.0 409.0 C1108.5 409.8 1115.0 408.7 1121.0 407.0 C1127.0 405.3 1133.2 402.2 1139.0 399.0 C1144.8 395.8 1150.5 391.0 1156.0 388.0 C1161.5 385.0 1167.2 382.8 1172.0 381.0 C1176.8 379.2 1181.8 376.2 1185.0 377.0 C1188.2 377.8 1189.7 382.7 1191.5 386.0 C1193.3 389.3 1195.6 393.3 1196.0 397.0 C1196.4 400.7 1194.8 404.0 1194.0 408.0 C1193.2 412.0 1191.3 416.7 1191.5 421.0 C1191.7 425.3 1194.8 430.0 1195.0 434.0 C1195.2 438.0 1192.7 442.0 1193.0 445.0 C1193.3 448.0 1195.5 449.3 1197.0 452.0 C1198.5 454.7 1202.2 458.7 1202.0 461.0 C1201.8 463.3 1198.8 465.7 1196.0 466.0 C1193.2 466.3 1188.7 462.3 1185.0 463.0 C1181.3 463.7 1177.0 467.0 1174.0 470.0 C1171.0 473.0 1166.3 476.7 1167.0 481.0 C1167.7 485.3 1175.3 492.0 1178.0 496.0 C1180.7 500.0 1183.0 501.3 1183.0 505.0 C1183.0 508.7 1181.3 515.1 1178.0 518.0 C1174.7 520.9 1164.5 519.2 1163.0 522.5 C1161.5 525.8 1164.7 533.9 1169.0 538.0 C1173.3 542.1 1185.2 544.5 1189.0 547.0 C1192.8 549.5 1193.3 550.8 1191.5 553.0 C1189.7 555.2 1182.2 557.8 1178.0 560.0 C1173.8 562.2 1169.7 562.7 1166.0 566.0 C1162.3 569.3 1159.2 575.5 1156.0 580.0 C1152.8 584.5 1149.2 588.3 1147.0 593.0 C1144.8 597.7 1146.3 605.7 1142.6 608.0 C1138.9 610.3 1131.6 607.7 1125.0 607.0 C1118.4 606.3 1109.6 606.7 1103.0 604.0 C1096.4 601.3 1091.3 594.7 1085.5 591.0 C1079.7 587.3 1072.1 585.7 1068.0 582.0 C1063.9 578.3 1061.7 572.7 1061.0 569.0 C1060.3 565.3 1062.5 562.2 1064.0 560.0 C1065.5 557.8 1065.9 557.5 1070.0 555.5 C1074.1 553.5 1082.5 549.2 1088.7 548.0 C1094.9 546.8 1102.5 549.0 1107.0 548.0 C1111.5 547.0 1114.2 544.2 1116.0 542.0 C1117.8 539.8 1118.7 537.3 1118.0 535.0 C1117.3 532.7 1115.5 530.0 1112.0 528.0 C1108.5 526.0 1101.8 524.0 1097.0 523.0 C1092.2 522.0 1086.2 521.8 1083.0 522.0 C1079.8 522.2 1079.0 525.2 1078.0 524.0 C1077.0 522.8 1076.8 520.0 1077.0 515.0 C1077.2 510.0 1079.0 500.8 1079.0 494.0 C1079.0 487.2 1078.2 480.0 1077.0 474.0 C1075.8 468.0 1075.7 463.8 1072.0 458.0 C1068.3 452.2 1054.5 443.2 1055.0 439.0 C1055.5 434.8 1069.5 434.3 1075.0 433.0 C1080.5 431.7 1083.3 430.8 1088.0 431.0 C1092.7 431.2 1100.0 435.5 1103.0 434.0 C1106.0 432.5 1104.8 425.2 1106.0 422.0 C1107.2 418.8 1111.0 416.7 1110.0 415.0 C1109.0 413.3 1103.7 414.2 1100.0 412.0 C1096.3 409.8 1087.5 402.5 1088.0 402.0Z" fill="#466549"/>
<path d="M1061.0 526.0 C1062.2 527.3 1063.8 535.0 1063.0 540.0 C1062.2 545.0 1058.5 550.7 1056.0 556.0 C1053.5 561.3 1050.3 567.0 1048.0 572.0 C1045.7 577.0 1043.5 585.5 1042.0 586.0 C1040.5 586.5 1039.0 579.3 1039.0 575.0 C1039.0 570.7 1040.2 565.0 1042.0 560.0 C1043.8 555.0 1047.7 549.7 1050.0 545.0 C1052.3 540.3 1054.2 535.2 1056.0 532.0 C1057.8 528.8 1059.8 524.7 1061.0 526.0Z" fill="#466549"/>
<path d="M1028.0 546.0 C1029.7 544.8 1035.3 546.0 1037.0 548.0 C1038.7 550.0 1039.0 555.7 1038.0 558.0 C1037.0 560.3 1032.8 562.5 1031.0 562.0 C1029.2 561.5 1027.5 557.7 1027.0 555.0 C1026.5 552.3 1026.3 547.2 1028.0 546.0Z" fill="#466549"/>
<path d="M999.0 551.0 C1000.5 550.7 1005.8 553.5 1010.0 556.0 C1014.2 558.5 1020.7 563.2 1024.0 566.0 C1027.3 568.8 1030.3 571.7 1030.0 573.0 C1029.7 574.3 1025.7 575.2 1022.0 574.0 C1018.3 572.8 1011.5 568.7 1008.0 566.0 C1004.5 563.3 1002.5 560.5 1001.0 558.0 C999.5 555.5 997.5 551.3 999.0 551.0Z" fill="#466549"/>
<path d="M1031.0 398.0 C1032.5 398.7 1031.0 408.0 1034.0 410.0 C1037.0 412.0 1047.7 408.7 1049.0 410.0 C1050.3 411.3 1043.8 415.0 1042.0 418.0 C1040.2 421.0 1039.2 424.7 1038.0 428.0 C1036.8 431.3 1036.8 436.5 1035.0 438.0 C1033.2 439.5 1028.5 439.0 1027.0 437.0 C1025.5 435.0 1025.5 429.2 1026.0 426.0 C1026.5 422.8 1030.2 421.3 1030.0 418.0 C1029.8 414.7 1024.8 409.3 1025.0 406.0 C1025.2 402.7 1029.5 397.3 1031.0 398.0Z" fill="#466549"/>
<path d="M1072.0 413.0 C1072.2 412.0 1073.7 412.2 1076.0 414.0 C1078.3 415.8 1084.8 422.0 1086.0 424.0 C1087.2 426.0 1084.8 426.7 1083.0 426.0 C1081.2 425.3 1076.8 422.2 1075.0 420.0 C1073.2 417.8 1071.8 414.0 1072.0 413.0Z" fill="#466549"/>
<path d="M1002.0 434.0 C1002.3 432.3 1008.0 427.0 1010.0 426.0 C1012.0 425.0 1014.3 426.3 1014.0 428.0 C1013.7 429.7 1010.0 435.0 1008.0 436.0 C1006.0 437.0 1001.7 435.7 1002.0 434.0Z" fill="#466549"/>
<path d="M1207.0 450.0 C1207.5 448.3 1210.2 447.8 1211.0 449.0 C1211.8 450.2 1212.5 455.3 1212.0 457.0 C1211.5 458.7 1208.8 460.2 1208.0 459.0 C1207.2 457.8 1206.5 451.7 1207.0 450.0Z" fill="#466549"/>
<path d="M1155.0 690.0 C1132.5 686.3 1154.1 673.7 1155.0 668.0 C1155.9 662.3 1157.2 660.9 1160.5 656.0 C1163.8 651.1 1170.2 644.5 1174.6 638.7 C1179.0 632.9 1184.4 624.5 1187.0 621.4 C1189.6 618.3 1187.3 619.5 1190.0 620.0 C1192.7 620.5 1198.2 623.7 1203.0 624.5 C1207.8 625.3 1214.0 625.2 1218.7 625.0 C1223.4 624.8 1228.4 626.0 1231.0 623.0 C1233.6 620.0 1232.8 611.2 1234.4 607.0 C1236.0 602.8 1238.1 600.4 1240.7 597.8 C1243.3 595.2 1246.3 592.8 1250.0 591.5 C1253.7 590.2 1260.4 589.5 1262.7 590.0 C1265.0 590.5 1264.5 592.5 1264.0 594.6 C1263.5 596.7 1259.3 600.4 1259.6 602.5 C1259.9 604.6 1262.5 606.5 1265.9 607.0 C1269.3 607.5 1277.0 604.8 1280.0 605.6 C1283.0 606.4 1284.2 609.1 1284.0 612.0 C1283.8 614.9 1278.9 619.9 1278.5 623.0 C1278.1 626.1 1280.3 628.2 1281.6 630.8 C1282.8 633.4 1284.9 635.8 1286.0 638.7 C1287.1 641.6 1287.3 639.5 1288.0 648.0 C1288.7 656.5 1312.2 683.0 1290.0 690.0 C1267.8 697.0 1177.5 693.7 1155.0 690.0Z" fill="#43614a"/>
</g>
<g clip-path="url(#landclip)">
<g filter="url(#halo)">
<path d="M1170.0 352.0 C1175.0 320.8 1191.3 340.3 1200.0 338.0 C1208.7 335.7 1214.5 334.7 1222.0 338.0 C1229.5 341.3 1235.0 351.3 1245.0 358.0 C1255.0 364.7 1270.2 373.0 1282.0 378.0 C1293.8 383.0 1305.5 387.3 1316.0 388.0 C1326.5 388.7 1340.2 359.2 1345.0 382.0 C1349.8 404.8 1374.2 501.2 1345.0 525.0 C1315.8 548.8 1199.2 553.8 1170.0 525.0 C1140.8 496.2 1165.0 383.2 1170.0 352.0Z" fill="#42614a" opacity="0.95"/>
<path d="M1158.0 222.0 C1159.0 218.8 1167.3 230.0 1172.0 236.0 C1176.7 242.0 1181.3 250.7 1186.0 258.0 C1190.7 265.3 1195.0 272.7 1200.0 280.0 C1205.0 287.3 1211.3 294.5 1216.0 302.0 C1220.7 309.5 1226.3 318.3 1228.0 325.0 C1229.7 331.7 1229.7 339.8 1226.0 342.0 C1222.3 344.2 1211.0 344.2 1206.0 338.0 C1201.0 331.8 1200.3 314.7 1196.0 305.0 C1191.7 295.3 1185.0 288.3 1180.0 280.0 C1175.0 271.7 1169.7 264.7 1166.0 255.0 C1162.3 245.3 1157.0 225.2 1158.0 222.0Z" fill="#3c5a44" opacity="0.8"/>
<path d="M826.0 300.0 C831.0 266.7 844.0 293.3 850.0 300.0 C856.0 306.7 860.7 323.3 862.0 340.0 C863.3 356.7 857.7 383.3 858.0 400.0 C858.3 416.7 862.0 426.7 864.0 440.0 C866.0 453.3 867.3 466.7 870.0 480.0 C872.7 493.3 880.0 506.7 880.0 520.0 C880.0 533.3 871.3 546.7 870.0 560.0 C868.7 573.3 869.5 586.7 872.0 600.0 C874.5 613.3 883.7 628.7 885.0 640.0 C886.3 651.3 887.5 663.3 880.0 668.0 C872.5 672.7 850.0 696.0 840.0 668.0 C830.0 640.0 822.3 561.3 820.0 500.0 C817.7 438.7 821.0 333.3 826.0 300.0Z" fill="#4c6b4d" opacity="0.7"/>
<path d="M925.0 385.0 C930.8 380.0 950.0 378.3 960.0 380.0 C970.0 381.7 981.7 388.3 985.0 395.0 C988.3 401.7 985.8 415.0 980.0 420.0 C974.2 425.0 959.2 426.7 950.0 425.0 C940.8 423.3 929.2 416.7 925.0 410.0 C920.8 403.3 919.2 390.0 925.0 385.0Z" fill="#3a5840" opacity="0.8"/>
</g>
<path d="M1037.0 145.0 C1038.0 146.2 1033.2 151.0 1031.0 154.0 C1028.8 157.0 1025.2 159.7 1024.0 163.0 C1022.8 166.3 1023.5 170.0 1024.0 174.0 C1024.5 178.0 1026.1 182.2 1027.0 187.0 C1027.9 191.8 1029.1 197.8 1029.5 203.0 C1029.9 208.2 1030.4 213.3 1029.5 218.0 C1028.6 222.7 1026.1 226.7 1024.0 231.0 C1021.9 235.3 1019.2 238.8 1017.0 244.0 C1014.8 249.2 1012.7 256.0 1011.0 262.0 C1009.3 268.0 1007.3 274.0 1007.0 280.0 C1006.7 286.0 1008.0 292.7 1009.0 298.0 C1010.0 303.3 1011.2 308.2 1013.0 312.0 C1014.8 315.8 1016.3 318.9 1020.0 321.0 C1023.7 323.1 1029.7 323.9 1035.0 324.5 C1040.3 325.1 1047.8 323.2 1052.0 324.5 C1056.2 325.8 1058.3 329.2 1060.0 332.0 C1061.7 334.8 1062.3 337.5 1062.0 341.0 C1061.7 344.5 1059.4 349.5 1058.0 353.0 C1056.6 356.5 1055.0 359.2 1053.5 362.0 C1052.0 364.8 1050.8 367.5 1049.0 370.0 C1047.2 372.5 1044.8 375.1 1043.0 377.0 C1041.2 378.9 1040.0 381.5 1038.5 381.5 C1037.0 381.5 1035.8 376.1 1034.0 377.0 C1032.2 377.9 1029.8 386.7 1028.0 387.0 C1026.2 387.3 1025.7 380.7 1023.5 379.0 C1021.3 377.3 1017.1 376.7 1015.0 377.0 C1012.9 377.3 1012.3 379.5 1011.0 381.0 C1009.7 382.5 1007.7 382.8 1007.0 386.0 C1006.3 389.2 1007.2 395.2 1007.0 400.0 C1006.8 404.8 1007.3 410.7 1006.0 415.0 C1004.7 419.3 1001.7 422.3 999.0 426.0 C996.3 429.7 991.7 433.7 990.0 437.0 C988.3 440.3 986.8 442.0 989.0 446.0 C991.2 450.0 998.7 459.0 1003.0 461.0 C1007.3 463.0 1011.3 459.5 1015.0 458.0 C1018.7 456.5 1022.3 452.7 1025.0 452.0 C1027.7 451.3 1029.2 452.3 1031.0 454.0 C1032.8 455.7 1033.5 459.0 1036.0 462.0 C1038.5 465.0 1043.8 468.2 1046.0 472.0 C1048.2 475.8 1048.3 480.3 1049.0 485.0 C1049.7 489.7 1050.2 493.2 1050.0 500.0 C1049.8 506.8 1049.7 519.2 1048.0 526.0 C1046.3 532.8 1043.5 538.0 1040.0 541.0 C1036.5 544.0 1031.5 544.0 1027.0 544.0 C1022.5 544.0 1017.3 542.2 1013.0 541.0 C1008.7 539.8 1005.4 538.8 1001.0 537.0 C996.6 535.2 990.0 531.0 986.5 530.0 C983.0 529.0 980.0 528.7 980.0 531.0 C980.0 533.3 985.2 538.7 986.5 544.0 C987.8 549.3 988.6 558.0 988.0 563.0 C987.4 568.0 983.3 570.8 983.0 574.0 C982.7 577.2 985.3 578.8 986.0 582.0 C986.7 585.2 985.7 588.3 987.0 593.0 C988.3 597.7 990.7 605.3 994.0 610.0 C997.3 614.7 1002.0 617.7 1007.0 621.0 C1012.0 624.3 1018.3 626.7 1024.0 630.0 C1029.7 633.3 1035.8 640.2 1041.0 641.0 C1046.2 641.8 1051.3 637.8 1055.0 635.0 C1058.7 632.2 1060.8 627.0 1063.0 624.0 C1065.2 621.0 1064.3 617.8 1068.0 617.0 C1071.7 616.2 1081.3 617.2 1085.0 619.0 C1088.7 620.8 1091.3 625.3 1090.0 628.0 C1088.7 630.7 1079.7 631.7 1077.0 635.0 C1074.3 638.3 1074.0 644.3 1074.0 648.0 C1074.0 651.7 1076.3 650.0 1077.0 657.0 C1077.7 664.0 1112.5 684.5 1078.0 690.0 C1043.5 695.5 904.7 693.7 870.0 690.0 C835.3 686.3 870.3 675.0 870.0 668.0 C869.7 661.0 868.7 653.5 868.0 648.0 C867.3 642.5 867.8 638.7 866.0 635.0 C864.2 631.3 858.9 629.7 857.5 626.0 C856.1 622.3 858.6 617.0 857.5 613.0 C856.4 609.0 853.2 605.3 851.0 602.0 C848.8 598.7 845.5 596.3 844.0 593.0 C842.5 589.7 842.0 585.7 842.0 582.0 C842.0 578.3 843.2 575.8 844.0 571.0 C844.8 566.2 845.5 558.2 847.0 553.0 C848.5 547.8 851.2 544.7 853.0 540.0 C854.8 535.3 857.3 530.5 857.7 525.0 C858.1 519.5 856.6 512.5 855.5 507.0 C854.4 501.5 853.6 496.8 851.0 492.0 C848.4 487.2 844.4 482.6 840.0 478.5 C835.6 474.4 826.2 472.5 824.7 467.4 C823.2 462.2 829.5 453.8 831.0 447.6 C832.5 441.4 834.2 437.4 833.5 430.0 C832.8 422.6 827.9 411.5 827.0 403.0 C826.1 394.5 827.7 386.7 828.0 379.0 C828.3 371.3 828.7 365.2 829.0 357.0 C829.3 348.8 829.2 337.3 830.0 330.0 C830.8 322.7 832.7 318.8 834.0 313.0 C835.3 307.2 836.3 301.2 838.0 295.0 C839.7 288.8 841.2 282.9 844.0 276.0 C846.8 269.1 851.7 258.5 855.0 253.5 C858.3 248.5 860.5 248.2 864.0 246.0 C867.5 243.8 870.3 242.7 876.0 240.5 C881.7 238.3 890.0 234.4 898.0 233.0 C906.0 231.6 917.2 233.2 924.0 232.0 C930.8 230.8 934.7 227.9 939.0 225.6 C943.3 223.3 946.7 221.8 950.0 218.0 C953.3 214.2 956.3 208.5 959.0 203.0 C961.7 197.5 963.4 190.2 966.0 185.0 C968.6 179.8 972.0 175.3 974.5 172.0 C977.0 168.7 977.8 166.8 981.0 165.0 C984.2 163.2 988.8 163.2 994.0 161.0 C999.2 158.8 1006.8 154.4 1012.0 152.0 C1017.2 149.6 1020.8 147.7 1025.0 146.5 C1029.2 145.3 1036.0 143.8 1037.0 145.0Z" fill="#0c1f12" filter="url(#tex)" opacity=".38"/>
<path d="M1054.0 200.0 C1055.0 198.5 1057.0 198.0 1058.0 199.0 C1059.0 200.0 1058.0 205.3 1060.0 206.0 C1062.0 206.7 1066.3 203.2 1070.0 203.0 C1073.7 202.8 1079.8 203.3 1082.0 205.0 C1084.2 206.7 1083.7 210.2 1083.0 213.0 C1082.3 215.8 1080.2 219.2 1078.0 222.0 C1075.8 224.8 1072.7 228.3 1070.0 230.0 C1067.3 231.7 1064.3 232.7 1062.0 232.0 C1059.7 231.3 1057.8 228.7 1056.0 226.0 C1054.2 223.3 1051.7 219.0 1051.0 216.0 C1050.3 213.0 1051.5 210.7 1052.0 208.0 C1052.5 205.3 1053.0 201.5 1054.0 200.0Z" fill="#0c1f12" filter="url(#tex)" opacity=".38"/>
<path d="M1107.0 292.0 C1109.0 290.3 1115.3 289.8 1118.0 290.0 C1120.7 290.2 1123.2 291.3 1123.0 293.0 C1122.8 294.7 1119.2 298.0 1117.0 300.0 C1114.8 302.0 1111.8 305.0 1110.0 305.0 C1108.2 305.0 1106.5 302.2 1106.0 300.0 C1105.5 297.8 1105.0 293.7 1107.0 292.0Z" fill="#0c1f12" filter="url(#tex)" opacity=".38"/>
<path d="M1108.0 110.0 C1149.7 106.5 1318.0 51.5 1360.0 110.0 C1402.0 168.5 1364.5 402.5 1360.0 461.0 C1355.5 519.5 1340.2 458.7 1333.0 461.0 C1325.8 463.3 1323.7 470.6 1317.0 474.6 C1310.3 478.6 1301.0 481.6 1293.0 485.0 C1285.0 488.4 1276.3 492.2 1269.0 495.0 C1261.7 497.8 1255.2 501.8 1249.0 502.0 C1242.8 502.2 1236.0 497.3 1231.5 496.0 C1227.0 494.7 1224.2 493.5 1222.0 494.0 C1219.8 494.5 1219.4 499.0 1218.0 499.0 C1216.6 499.0 1214.2 497.0 1213.5 494.0 C1212.8 491.0 1212.8 485.3 1213.5 481.0 C1214.2 476.7 1216.2 472.8 1218.0 468.0 C1219.8 463.2 1223.8 456.7 1224.5 452.0 C1225.2 447.3 1222.8 443.0 1222.0 440.0 C1221.2 437.0 1221.4 437.8 1220.0 434.0 C1218.6 430.2 1215.7 422.2 1213.5 417.0 C1211.3 411.8 1208.8 406.8 1207.0 403.0 C1205.2 399.2 1205.1 398.5 1202.5 394.5 C1199.9 390.5 1194.1 383.4 1191.5 379.0 C1188.9 374.6 1188.5 371.7 1187.0 368.0 C1185.5 364.3 1181.8 358.8 1182.6 357.0 C1183.3 355.2 1187.1 356.7 1191.5 357.0 C1195.9 357.3 1207.6 360.1 1209.0 359.0 C1210.4 357.9 1202.9 353.8 1200.0 350.5 C1197.1 347.2 1191.8 342.1 1191.5 339.5 C1191.2 336.9 1194.0 336.4 1198.0 335.0 C1202.0 333.6 1213.5 334.3 1215.7 331.0 C1217.9 327.7 1213.2 320.6 1211.0 315.0 C1208.8 309.4 1206.2 303.4 1202.5 297.6 C1198.8 291.8 1193.1 285.2 1189.0 280.0 C1184.9 274.8 1180.9 271.8 1178.0 266.6 C1175.1 261.4 1174.1 254.5 1171.6 249.0 C1169.1 243.5 1165.9 238.7 1163.0 233.5 C1160.1 228.3 1157.3 222.8 1154.0 218.0 C1150.7 213.2 1146.3 209.8 1143.0 205.0 C1139.7 200.2 1137.3 195.4 1134.0 189.5 C1130.7 183.6 1126.3 175.8 1123.0 169.6 C1119.7 163.3 1116.2 158.4 1114.0 152.0 C1111.8 145.6 1111.0 138.0 1110.0 131.0 C1109.0 124.0 1066.3 113.5 1108.0 110.0Z" fill="#0c1f12" filter="url(#tex)" opacity=".38"/>
<path d="M1088.0 402.0 C1088.5 401.5 1097.5 408.2 1103.0 409.0 C1108.5 409.8 1115.0 408.7 1121.0 407.0 C1127.0 405.3 1133.2 402.2 1139.0 399.0 C1144.8 395.8 1150.5 391.0 1156.0 388.0 C1161.5 385.0 1167.2 382.8 1172.0 381.0 C1176.8 379.2 1181.8 376.2 1185.0 377.0 C1188.2 377.8 1189.7 382.7 1191.5 386.0 C1193.3 389.3 1195.6 393.3 1196.0 397.0 C1196.4 400.7 1194.8 404.0 1194.0 408.0 C1193.2 412.0 1191.3 416.7 1191.5 421.0 C1191.7 425.3 1194.8 430.0 1195.0 434.0 C1195.2 438.0 1192.7 442.0 1193.0 445.0 C1193.3 448.0 1195.5 449.3 1197.0 452.0 C1198.5 454.7 1202.2 458.7 1202.0 461.0 C1201.8 463.3 1198.8 465.7 1196.0 466.0 C1193.2 466.3 1188.7 462.3 1185.0 463.0 C1181.3 463.7 1177.0 467.0 1174.0 470.0 C1171.0 473.0 1166.3 476.7 1167.0 481.0 C1167.7 485.3 1175.3 492.0 1178.0 496.0 C1180.7 500.0 1183.0 501.3 1183.0 505.0 C1183.0 508.7 1181.3 515.1 1178.0 518.0 C1174.7 520.9 1164.5 519.2 1163.0 522.5 C1161.5 525.8 1164.7 533.9 1169.0 538.0 C1173.3 542.1 1185.2 544.5 1189.0 547.0 C1192.8 549.5 1193.3 550.8 1191.5 553.0 C1189.7 555.2 1182.2 557.8 1178.0 560.0 C1173.8 562.2 1169.7 562.7 1166.0 566.0 C1162.3 569.3 1159.2 575.5 1156.0 580.0 C1152.8 584.5 1149.2 588.3 1147.0 593.0 C1144.8 597.7 1146.3 605.7 1142.6 608.0 C1138.9 610.3 1131.6 607.7 1125.0 607.0 C1118.4 606.3 1109.6 606.7 1103.0 604.0 C1096.4 601.3 1091.3 594.7 1085.5 591.0 C1079.7 587.3 1072.1 585.7 1068.0 582.0 C1063.9 578.3 1061.7 572.7 1061.0 569.0 C1060.3 565.3 1062.5 562.2 1064.0 560.0 C1065.5 557.8 1065.9 557.5 1070.0 555.5 C1074.1 553.5 1082.5 549.2 1088.7 548.0 C1094.9 546.8 1102.5 549.0 1107.0 548.0 C1111.5 547.0 1114.2 544.2 1116.0 542.0 C1117.8 539.8 1118.7 537.3 1118.0 535.0 C1117.3 532.7 1115.5 530.0 1112.0 528.0 C1108.5 526.0 1101.8 524.0 1097.0 523.0 C1092.2 522.0 1086.2 521.8 1083.0 522.0 C1079.8 522.2 1079.0 525.2 1078.0 524.0 C1077.0 522.8 1076.8 520.0 1077.0 515.0 C1077.2 510.0 1079.0 500.8 1079.0 494.0 C1079.0 487.2 1078.2 480.0 1077.0 474.0 C1075.8 468.0 1075.7 463.8 1072.0 458.0 C1068.3 452.2 1054.5 443.2 1055.0 439.0 C1055.5 434.8 1069.5 434.3 1075.0 433.0 C1080.5 431.7 1083.3 430.8 1088.0 431.0 C1092.7 431.2 1100.0 435.5 1103.0 434.0 C1106.0 432.5 1104.8 425.2 1106.0 422.0 C1107.2 418.8 1111.0 416.7 1110.0 415.0 C1109.0 413.3 1103.7 414.2 1100.0 412.0 C1096.3 409.8 1087.5 402.5 1088.0 402.0Z" fill="#0c1f12" filter="url(#tex)" opacity=".38"/>
<path d="M1061.0 526.0 C1062.2 527.3 1063.8 535.0 1063.0 540.0 C1062.2 545.0 1058.5 550.7 1056.0 556.0 C1053.5 561.3 1050.3 567.0 1048.0 572.0 C1045.7 577.0 1043.5 585.5 1042.0 586.0 C1040.5 586.5 1039.0 579.3 1039.0 575.0 C1039.0 570.7 1040.2 565.0 1042.0 560.0 C1043.8 555.0 1047.7 549.7 1050.0 545.0 C1052.3 540.3 1054.2 535.2 1056.0 532.0 C1057.8 528.8 1059.8 524.7 1061.0 526.0Z" fill="#0c1f12" filter="url(#tex)" opacity=".38"/>
<path d="M1028.0 546.0 C1029.7 544.8 1035.3 546.0 1037.0 548.0 C1038.7 550.0 1039.0 555.7 1038.0 558.0 C1037.0 560.3 1032.8 562.5 1031.0 562.0 C1029.2 561.5 1027.5 557.7 1027.0 555.0 C1026.5 552.3 1026.3 547.2 1028.0 546.0Z" fill="#0c1f12" filter="url(#tex)" opacity=".38"/>
<path d="M999.0 551.0 C1000.5 550.7 1005.8 553.5 1010.0 556.0 C1014.2 558.5 1020.7 563.2 1024.0 566.0 C1027.3 568.8 1030.3 571.7 1030.0 573.0 C1029.7 574.3 1025.7 575.2 1022.0 574.0 C1018.3 572.8 1011.5 568.7 1008.0 566.0 C1004.5 563.3 1002.5 560.5 1001.0 558.0 C999.5 555.5 997.5 551.3 999.0 551.0Z" fill="#0c1f12" filter="url(#tex)" opacity=".38"/>
<path d="M1031.0 398.0 C1032.5 398.7 1031.0 408.0 1034.0 410.0 C1037.0 412.0 1047.7 408.7 1049.0 410.0 C1050.3 411.3 1043.8 415.0 1042.0 418.0 C1040.2 421.0 1039.2 424.7 1038.0 428.0 C1036.8 431.3 1036.8 436.5 1035.0 438.0 C1033.2 439.5 1028.5 439.0 1027.0 437.0 C1025.5 435.0 1025.5 429.2 1026.0 426.0 C1026.5 422.8 1030.2 421.3 1030.0 418.0 C1029.8 414.7 1024.8 409.3 1025.0 406.0 C1025.2 402.7 1029.5 397.3 1031.0 398.0Z" fill="#0c1f12" filter="url(#tex)" opacity=".38"/>
<path d="M1072.0 413.0 C1072.2 412.0 1073.7 412.2 1076.0 414.0 C1078.3 415.8 1084.8 422.0 1086.0 424.0 C1087.2 426.0 1084.8 426.7 1083.0 426.0 C1081.2 425.3 1076.8 422.2 1075.0 420.0 C1073.2 417.8 1071.8 414.0 1072.0 413.0Z" fill="#0c1f12" filter="url(#tex)" opacity=".38"/>
<path d="M1002.0 434.0 C1002.3 432.3 1008.0 427.0 1010.0 426.0 C1012.0 425.0 1014.3 426.3 1014.0 428.0 C1013.7 429.7 1010.0 435.0 1008.0 436.0 C1006.0 437.0 1001.7 435.7 1002.0 434.0Z" fill="#0c1f12" filter="url(#tex)" opacity=".38"/>
<path d="M1207.0 450.0 C1207.5 448.3 1210.2 447.8 1211.0 449.0 C1211.8 450.2 1212.5 455.3 1212.0 457.0 C1211.5 458.7 1208.8 460.2 1208.0 459.0 C1207.2 457.8 1206.5 451.7 1207.0 450.0Z" fill="#0c1f12" filter="url(#tex)" opacity=".38"/>
<path d="M1155.0 690.0 C1132.5 686.3 1154.1 673.7 1155.0 668.0 C1155.9 662.3 1157.2 660.9 1160.5 656.0 C1163.8 651.1 1170.2 644.5 1174.6 638.7 C1179.0 632.9 1184.4 624.5 1187.0 621.4 C1189.6 618.3 1187.3 619.5 1190.0 620.0 C1192.7 620.5 1198.2 623.7 1203.0 624.5 C1207.8 625.3 1214.0 625.2 1218.7 625.0 C1223.4 624.8 1228.4 626.0 1231.0 623.0 C1233.6 620.0 1232.8 611.2 1234.4 607.0 C1236.0 602.8 1238.1 600.4 1240.7 597.8 C1243.3 595.2 1246.3 592.8 1250.0 591.5 C1253.7 590.2 1260.4 589.5 1262.7 590.0 C1265.0 590.5 1264.5 592.5 1264.0 594.6 C1263.5 596.7 1259.3 600.4 1259.6 602.5 C1259.9 604.6 1262.5 606.5 1265.9 607.0 C1269.3 607.5 1277.0 604.8 1280.0 605.6 C1283.0 606.4 1284.2 609.1 1284.0 612.0 C1283.8 614.9 1278.9 619.9 1278.5 623.0 C1278.1 626.1 1280.3 628.2 1281.6 630.8 C1282.8 633.4 1284.9 635.8 1286.0 638.7 C1287.1 641.6 1287.3 639.5 1288.0 648.0 C1288.7 656.5 1312.2 683.0 1290.0 690.0 C1267.8 697.0 1177.5 693.7 1155.0 690.0Z" fill="#0c1f12" filter="url(#tex)" opacity=".38"/>
<path d="M1037.0 145.0 C1038.0 146.2 1033.2 151.0 1031.0 154.0 C1028.8 157.0 1025.2 159.7 1024.0 163.0 C1022.8 166.3 1023.5 170.0 1024.0 174.0 C1024.5 178.0 1026.1 182.2 1027.0 187.0 C1027.9 191.8 1029.1 197.8 1029.5 203.0 C1029.9 208.2 1030.4 213.3 1029.5 218.0 C1028.6 222.7 1026.1 226.7 1024.0 231.0 C1021.9 235.3 1019.2 238.8 1017.0 244.0 C1014.8 249.2 1012.7 256.0 1011.0 262.0 C1009.3 268.0 1007.3 274.0 1007.0 280.0 C1006.7 286.0 1008.0 292.7 1009.0 298.0 C1010.0 303.3 1011.2 308.2 1013.0 312.0 C1014.8 315.8 1016.3 318.9 1020.0 321.0 C1023.7 323.1 1029.7 323.9 1035.0 324.5 C1040.3 325.1 1047.8 323.2 1052.0 324.5 C1056.2 325.8 1058.3 329.2 1060.0 332.0 C1061.7 334.8 1062.3 337.5 1062.0 341.0 C1061.7 344.5 1059.4 349.5 1058.0 353.0 C1056.6 356.5 1055.0 359.2 1053.5 362.0 C1052.0 364.8 1050.8 367.5 1049.0 370.0 C1047.2 372.5 1044.8 375.1 1043.0 377.0 C1041.2 378.9 1040.0 381.5 1038.5 381.5 C1037.0 381.5 1035.8 376.1 1034.0 377.0 C1032.2 377.9 1029.8 386.7 1028.0 387.0 C1026.2 387.3 1025.7 380.7 1023.5 379.0 C1021.3 377.3 1017.1 376.7 1015.0 377.0 C1012.9 377.3 1012.3 379.5 1011.0 381.0 C1009.7 382.5 1007.7 382.8 1007.0 386.0 C1006.3 389.2 1007.2 395.2 1007.0 400.0 C1006.8 404.8 1007.3 410.7 1006.0 415.0 C1004.7 419.3 1001.7 422.3 999.0 426.0 C996.3 429.7 991.7 433.7 990.0 437.0 C988.3 440.3 986.8 442.0 989.0 446.0 C991.2 450.0 998.7 459.0 1003.0 461.0 C1007.3 463.0 1011.3 459.5 1015.0 458.0 C1018.7 456.5 1022.3 452.7 1025.0 452.0 C1027.7 451.3 1029.2 452.3 1031.0 454.0 C1032.8 455.7 1033.5 459.0 1036.0 462.0 C1038.5 465.0 1043.8 468.2 1046.0 472.0 C1048.2 475.8 1048.3 480.3 1049.0 485.0 C1049.7 489.7 1050.2 493.2 1050.0 500.0 C1049.8 506.8 1049.7 519.2 1048.0 526.0 C1046.3 532.8 1043.5 538.0 1040.0 541.0 C1036.5 544.0 1031.5 544.0 1027.0 544.0 C1022.5 544.0 1017.3 542.2 1013.0 541.0 C1008.7 539.8 1005.4 538.8 1001.0 537.0 C996.6 535.2 990.0 531.0 986.5 530.0 C983.0 529.0 980.0 528.7 980.0 531.0 C980.0 533.3 985.2 538.7 986.5 544.0 C987.8 549.3 988.6 558.0 988.0 563.0 C987.4 568.0 983.3 570.8 983.0 574.0 C982.7 577.2 985.3 578.8 986.0 582.0 C986.7 585.2 985.7 588.3 987.0 593.0 C988.3 597.7 990.7 605.3 994.0 610.0 C997.3 614.7 1002.0 617.7 1007.0 621.0 C1012.0 624.3 1018.3 626.7 1024.0 630.0 C1029.7 633.3 1035.8 640.2 1041.0 641.0 C1046.2 641.8 1051.3 637.8 1055.0 635.0 C1058.7 632.2 1060.8 627.0 1063.0 624.0 C1065.2 621.0 1064.3 617.8 1068.0 617.0 C1071.7 616.2 1081.3 617.2 1085.0 619.0 C1088.7 620.8 1091.3 625.3 1090.0 628.0 C1088.7 630.7 1079.7 631.7 1077.0 635.0 C1074.3 638.3 1074.0 644.3 1074.0 648.0 C1074.0 651.7 1076.3 650.0 1077.0 657.0 C1077.7 664.0 1112.5 684.5 1078.0 690.0 C1043.5 695.5 904.7 693.7 870.0 690.0 C835.3 686.3 870.3 675.0 870.0 668.0 C869.7 661.0 868.7 653.5 868.0 648.0 C867.3 642.5 867.8 638.7 866.0 635.0 C864.2 631.3 858.9 629.7 857.5 626.0 C856.1 622.3 858.6 617.0 857.5 613.0 C856.4 609.0 853.2 605.3 851.0 602.0 C848.8 598.7 845.5 596.3 844.0 593.0 C842.5 589.7 842.0 585.7 842.0 582.0 C842.0 578.3 843.2 575.8 844.0 571.0 C844.8 566.2 845.5 558.2 847.0 553.0 C848.5 547.8 851.2 544.7 853.0 540.0 C854.8 535.3 857.3 530.5 857.7 525.0 C858.1 519.5 856.6 512.5 855.5 507.0 C854.4 501.5 853.6 496.8 851.0 492.0 C848.4 487.2 844.4 482.6 840.0 478.5 C835.6 474.4 826.2 472.5 824.7 467.4 C823.2 462.2 829.5 453.8 831.0 447.6 C832.5 441.4 834.2 437.4 833.5 430.0 C832.8 422.6 827.9 411.5 827.0 403.0 C826.1 394.5 827.7 386.7 828.0 379.0 C828.3 371.3 828.7 365.2 829.0 357.0 C829.3 348.8 829.2 337.3 830.0 330.0 C830.8 322.7 832.7 318.8 834.0 313.0 C835.3 307.2 836.3 301.2 838.0 295.0 C839.7 288.8 841.2 282.9 844.0 276.0 C846.8 269.1 851.7 258.5 855.0 253.5 C858.3 248.5 860.5 248.2 864.0 246.0 C867.5 243.8 870.3 242.7 876.0 240.5 C881.7 238.3 890.0 234.4 898.0 233.0 C906.0 231.6 917.2 233.2 924.0 232.0 C930.8 230.8 934.7 227.9 939.0 225.6 C943.3 223.3 946.7 221.8 950.0 218.0 C953.3 214.2 956.3 208.5 959.0 203.0 C961.7 197.5 963.4 190.2 966.0 185.0 C968.6 179.8 972.0 175.3 974.5 172.0 C977.0 168.7 977.8 166.8 981.0 165.0 C984.2 163.2 988.8 163.2 994.0 161.0 C999.2 158.8 1006.8 154.4 1012.0 152.0 C1017.2 149.6 1020.8 147.7 1025.0 146.5 C1029.2 145.3 1036.0 143.8 1037.0 145.0Z" fill="#fff" filter="url(#tex2)" opacity=".2"/>
<path d="M1054.0 200.0 C1055.0 198.5 1057.0 198.0 1058.0 199.0 C1059.0 200.0 1058.0 205.3 1060.0 206.0 C1062.0 206.7 1066.3 203.2 1070.0 203.0 C1073.7 202.8 1079.8 203.3 1082.0 205.0 C1084.2 206.7 1083.7 210.2 1083.0 213.0 C1082.3 215.8 1080.2 219.2 1078.0 222.0 C1075.8 224.8 1072.7 228.3 1070.0 230.0 C1067.3 231.7 1064.3 232.7 1062.0 232.0 C1059.7 231.3 1057.8 228.7 1056.0 226.0 C1054.2 223.3 1051.7 219.0 1051.0 216.0 C1050.3 213.0 1051.5 210.7 1052.0 208.0 C1052.5 205.3 1053.0 201.5 1054.0 200.0Z" fill="#fff" filter="url(#tex2)" opacity=".2"/>
<path d="M1107.0 292.0 C1109.0 290.3 1115.3 289.8 1118.0 290.0 C1120.7 290.2 1123.2 291.3 1123.0 293.0 C1122.8 294.7 1119.2 298.0 1117.0 300.0 C1114.8 302.0 1111.8 305.0 1110.0 305.0 C1108.2 305.0 1106.5 302.2 1106.0 300.0 C1105.5 297.8 1105.0 293.7 1107.0 292.0Z" fill="#fff" filter="url(#tex2)" opacity=".2"/>
<path d="M1108.0 110.0 C1149.7 106.5 1318.0 51.5 1360.0 110.0 C1402.0 168.5 1364.5 402.5 1360.0 461.0 C1355.5 519.5 1340.2 458.7 1333.0 461.0 C1325.8 463.3 1323.7 470.6 1317.0 474.6 C1310.3 478.6 1301.0 481.6 1293.0 485.0 C1285.0 488.4 1276.3 492.2 1269.0 495.0 C1261.7 497.8 1255.2 501.8 1249.0 502.0 C1242.8 502.2 1236.0 497.3 1231.5 496.0 C1227.0 494.7 1224.2 493.5 1222.0 494.0 C1219.8 494.5 1219.4 499.0 1218.0 499.0 C1216.6 499.0 1214.2 497.0 1213.5 494.0 C1212.8 491.0 1212.8 485.3 1213.5 481.0 C1214.2 476.7 1216.2 472.8 1218.0 468.0 C1219.8 463.2 1223.8 456.7 1224.5 452.0 C1225.2 447.3 1222.8 443.0 1222.0 440.0 C1221.2 437.0 1221.4 437.8 1220.0 434.0 C1218.6 430.2 1215.7 422.2 1213.5 417.0 C1211.3 411.8 1208.8 406.8 1207.0 403.0 C1205.2 399.2 1205.1 398.5 1202.5 394.5 C1199.9 390.5 1194.1 383.4 1191.5 379.0 C1188.9 374.6 1188.5 371.7 1187.0 368.0 C1185.5 364.3 1181.8 358.8 1182.6 357.0 C1183.3 355.2 1187.1 356.7 1191.5 357.0 C1195.9 357.3 1207.6 360.1 1209.0 359.0 C1210.4 357.9 1202.9 353.8 1200.0 350.5 C1197.1 347.2 1191.8 342.1 1191.5 339.5 C1191.2 336.9 1194.0 336.4 1198.0 335.0 C1202.0 333.6 1213.5 334.3 1215.7 331.0 C1217.9 327.7 1213.2 320.6 1211.0 315.0 C1208.8 309.4 1206.2 303.4 1202.5 297.6 C1198.8 291.8 1193.1 285.2 1189.0 280.0 C1184.9 274.8 1180.9 271.8 1178.0 266.6 C1175.1 261.4 1174.1 254.5 1171.6 249.0 C1169.1 243.5 1165.9 238.7 1163.0 233.5 C1160.1 228.3 1157.3 222.8 1154.0 218.0 C1150.7 213.2 1146.3 209.8 1143.0 205.0 C1139.7 200.2 1137.3 195.4 1134.0 189.5 C1130.7 183.6 1126.3 175.8 1123.0 169.6 C1119.7 163.3 1116.2 158.4 1114.0 152.0 C1111.8 145.6 1111.0 138.0 1110.0 131.0 C1109.0 124.0 1066.3 113.5 1108.0 110.0Z" fill="#fff" filter="url(#tex2)" opacity=".2"/>
<path d="M1088.0 402.0 C1088.5 401.5 1097.5 408.2 1103.0 409.0 C1108.5 409.8 1115.0 408.7 1121.0 407.0 C1127.0 405.3 1133.2 402.2 1139.0 399.0 C1144.8 395.8 1150.5 391.0 1156.0 388.0 C1161.5 385.0 1167.2 382.8 1172.0 381.0 C1176.8 379.2 1181.8 376.2 1185.0 377.0 C1188.2 377.8 1189.7 382.7 1191.5 386.0 C1193.3 389.3 1195.6 393.3 1196.0 397.0 C1196.4 400.7 1194.8 404.0 1194.0 408.0 C1193.2 412.0 1191.3 416.7 1191.5 421.0 C1191.7 425.3 1194.8 430.0 1195.0 434.0 C1195.2 438.0 1192.7 442.0 1193.0 445.0 C1193.3 448.0 1195.5 449.3 1197.0 452.0 C1198.5 454.7 1202.2 458.7 1202.0 461.0 C1201.8 463.3 1198.8 465.7 1196.0 466.0 C1193.2 466.3 1188.7 462.3 1185.0 463.0 C1181.3 463.7 1177.0 467.0 1174.0 470.0 C1171.0 473.0 1166.3 476.7 1167.0 481.0 C1167.7 485.3 1175.3 492.0 1178.0 496.0 C1180.7 500.0 1183.0 501.3 1183.0 505.0 C1183.0 508.7 1181.3 515.1 1178.0 518.0 C1174.7 520.9 1164.5 519.2 1163.0 522.5 C1161.5 525.8 1164.7 533.9 1169.0 538.0 C1173.3 542.1 1185.2 544.5 1189.0 547.0 C1192.8 549.5 1193.3 550.8 1191.5 553.0 C1189.7 555.2 1182.2 557.8 1178.0 560.0 C1173.8 562.2 1169.7 562.7 1166.0 566.0 C1162.3 569.3 1159.2 575.5 1156.0 580.0 C1152.8 584.5 1149.2 588.3 1147.0 593.0 C1144.8 597.7 1146.3 605.7 1142.6 608.0 C1138.9 610.3 1131.6 607.7 1125.0 607.0 C1118.4 606.3 1109.6 606.7 1103.0 604.0 C1096.4 601.3 1091.3 594.7 1085.5 591.0 C1079.7 587.3 1072.1 585.7 1068.0 582.0 C1063.9 578.3 1061.7 572.7 1061.0 569.0 C1060.3 565.3 1062.5 562.2 1064.0 560.0 C1065.5 557.8 1065.9 557.5 1070.0 555.5 C1074.1 553.5 1082.5 549.2 1088.7 548.0 C1094.9 546.8 1102.5 549.0 1107.0 548.0 C1111.5 547.0 1114.2 544.2 1116.0 542.0 C1117.8 539.8 1118.7 537.3 1118.0 535.0 C1117.3 532.7 1115.5 530.0 1112.0 528.0 C1108.5 526.0 1101.8 524.0 1097.0 523.0 C1092.2 522.0 1086.2 521.8 1083.0 522.0 C1079.8 522.2 1079.0 525.2 1078.0 524.0 C1077.0 522.8 1076.8 520.0 1077.0 515.0 C1077.2 510.0 1079.0 500.8 1079.0 494.0 C1079.0 487.2 1078.2 480.0 1077.0 474.0 C1075.8 468.0 1075.7 463.8 1072.0 458.0 C1068.3 452.2 1054.5 443.2 1055.0 439.0 C1055.5 434.8 1069.5 434.3 1075.0 433.0 C1080.5 431.7 1083.3 430.8 1088.0 431.0 C1092.7 431.2 1100.0 435.5 1103.0 434.0 C1106.0 432.5 1104.8 425.2 1106.0 422.0 C1107.2 418.8 1111.0 416.7 1110.0 415.0 C1109.0 413.3 1103.7 414.2 1100.0 412.0 C1096.3 409.8 1087.5 402.5 1088.0 402.0Z" fill="#fff" filter="url(#tex2)" opacity=".2"/>
<path d="M1061.0 526.0 C1062.2 527.3 1063.8 535.0 1063.0 540.0 C1062.2 545.0 1058.5 550.7 1056.0 556.0 C1053.5 561.3 1050.3 567.0 1048.0 572.0 C1045.7 577.0 1043.5 585.5 1042.0 586.0 C1040.5 586.5 1039.0 579.3 1039.0 575.0 C1039.0 570.7 1040.2 565.0 1042.0 560.0 C1043.8 555.0 1047.7 549.7 1050.0 545.0 C1052.3 540.3 1054.2 535.2 1056.0 532.0 C1057.8 528.8 1059.8 524.7 1061.0 526.0Z" fill="#fff" filter="url(#tex2)" opacity=".2"/>
<path d="M1028.0 546.0 C1029.7 544.8 1035.3 546.0 1037.0 548.0 C1038.7 550.0 1039.0 555.7 1038.0 558.0 C1037.0 560.3 1032.8 562.5 1031.0 562.0 C1029.2 561.5 1027.5 557.7 1027.0 555.0 C1026.5 552.3 1026.3 547.2 1028.0 546.0Z" fill="#fff" filter="url(#tex2)" opacity=".2"/>
<path d="M999.0 551.0 C1000.5 550.7 1005.8 553.5 1010.0 556.0 C1014.2 558.5 1020.7 563.2 1024.0 566.0 C1027.3 568.8 1030.3 571.7 1030.0 573.0 C1029.7 574.3 1025.7 575.2 1022.0 574.0 C1018.3 572.8 1011.5 568.7 1008.0 566.0 C1004.5 563.3 1002.5 560.5 1001.0 558.0 C999.5 555.5 997.5 551.3 999.0 551.0Z" fill="#fff" filter="url(#tex2)" opacity=".2"/>
<path d="M1031.0 398.0 C1032.5 398.7 1031.0 408.0 1034.0 410.0 C1037.0 412.0 1047.7 408.7 1049.0 410.0 C1050.3 411.3 1043.8 415.0 1042.0 418.0 C1040.2 421.0 1039.2 424.7 1038.0 428.0 C1036.8 431.3 1036.8 436.5 1035.0 438.0 C1033.2 439.5 1028.5 439.0 1027.0 437.0 C1025.5 435.0 1025.5 429.2 1026.0 426.0 C1026.5 422.8 1030.2 421.3 1030.0 418.0 C1029.8 414.7 1024.8 409.3 1025.0 406.0 C1025.2 402.7 1029.5 397.3 1031.0 398.0Z" fill="#fff" filter="url(#tex2)" opacity=".2"/>
<path d="M1072.0 413.0 C1072.2 412.0 1073.7 412.2 1076.0 414.0 C1078.3 415.8 1084.8 422.0 1086.0 424.0 C1087.2 426.0 1084.8 426.7 1083.0 426.0 C1081.2 425.3 1076.8 422.2 1075.0 420.0 C1073.2 417.8 1071.8 414.0 1072.0 413.0Z" fill="#fff" filter="url(#tex2)" opacity=".2"/>
<path d="M1002.0 434.0 C1002.3 432.3 1008.0 427.0 1010.0 426.0 C1012.0 425.0 1014.3 426.3 1014.0 428.0 C1013.7 429.7 1010.0 435.0 1008.0 436.0 C1006.0 437.0 1001.7 435.7 1002.0 434.0Z" fill="#fff" filter="url(#tex2)" opacity=".2"/>
<path d="M1207.0 450.0 C1207.5 448.3 1210.2 447.8 1211.0 449.0 C1211.8 450.2 1212.5 455.3 1212.0 457.0 C1211.5 458.7 1208.8 460.2 1208.0 459.0 C1207.2 457.8 1206.5 451.7 1207.0 450.0Z" fill="#fff" filter="url(#tex2)" opacity=".2"/>
<path d="M1155.0 690.0 C1132.5 686.3 1154.1 673.7 1155.0 668.0 C1155.9 662.3 1157.2 660.9 1160.5 656.0 C1163.8 651.1 1170.2 644.5 1174.6 638.7 C1179.0 632.9 1184.4 624.5 1187.0 621.4 C1189.6 618.3 1187.3 619.5 1190.0 620.0 C1192.7 620.5 1198.2 623.7 1203.0 624.5 C1207.8 625.3 1214.0 625.2 1218.7 625.0 C1223.4 624.8 1228.4 626.0 1231.0 623.0 C1233.6 620.0 1232.8 611.2 1234.4 607.0 C1236.0 602.8 1238.1 600.4 1240.7 597.8 C1243.3 595.2 1246.3 592.8 1250.0 591.5 C1253.7 590.2 1260.4 589.5 1262.7 590.0 C1265.0 590.5 1264.5 592.5 1264.0 594.6 C1263.5 596.7 1259.3 600.4 1259.6 602.5 C1259.9 604.6 1262.5 606.5 1265.9 607.0 C1269.3 607.5 1277.0 604.8 1280.0 605.6 C1283.0 606.4 1284.2 609.1 1284.0 612.0 C1283.8 614.9 1278.9 619.9 1278.5 623.0 C1278.1 626.1 1280.3 628.2 1281.6 630.8 C1282.8 633.4 1284.9 635.8 1286.0 638.7 C1287.1 641.6 1287.3 639.5 1288.0 648.0 C1288.7 656.5 1312.2 683.0 1290.0 690.0 C1267.8 697.0 1177.5 693.7 1155.0 690.0Z" fill="#fff" filter="url(#tex2)" opacity=".2"/>
</g>
<g filter="url(#soft)">
<path d="M895.0 254.0 C897.0 252.3 901.5 251.2 905.0 251.0 C908.5 250.8 913.5 251.7 916.0 253.0 C918.5 254.3 919.7 256.5 920.0 259.0 C920.3 261.5 918.0 265.2 918.0 268.0 C918.0 270.8 920.7 273.7 920.0 276.0 C919.3 278.3 916.5 281.2 914.0 282.0 C911.5 282.8 907.5 282.0 905.0 281.0 C902.5 280.0 900.5 278.2 899.0 276.0 C897.5 273.8 897.0 270.5 896.0 268.0 C895.0 265.5 893.2 263.3 893.0 261.0 C892.8 258.7 893.0 255.7 895.0 254.0Z" fill="#213b3d"/>
<path d="M919.0 258.0 C921.2 257.2 926.8 254.8 932.0 253.5 C937.2 252.2 945.2 251.2 950.0 250.0 C954.8 248.8 956.5 246.3 961.0 246.0 C965.5 245.7 974.3 247.7 977.0 248.0" fill="none" stroke="#213b3d" stroke-width="2.5" stroke-linecap="round" stroke-linejoin="round"/>
<path d="M977.0 248.0 C979.2 248.5 984.8 248.8 990.0 251.0 C995.2 253.2 1005.0 259.3 1008.0 261.0" fill="none" stroke="#213b3d" stroke-width="1.5" stroke-linecap="round" stroke-linejoin="round"/>
<path d="M899.0 278.0 C897.3 278.8 892.0 280.3 889.0 283.0 C886.0 285.7 884.5 291.5 881.0 294.0 C877.5 296.5 871.8 298.5 868.0 298.0 C864.2 297.5 859.7 292.2 858.0 291.0" fill="none" stroke="#213b3d" stroke-width="3.5" stroke-linecap="round" stroke-linejoin="round"/>
<ellipse cx="851" cy="311" rx="12" ry="8" fill="#213b3d"/>
<path d="M862.0 312.0 C863.3 312.7 867.7 314.0 870.0 316.0 C872.3 318.0 875.2 321.3 876.0 324.0 C876.8 326.7 875.2 330.7 875.0 332.0" fill="none" stroke="#213b3d" stroke-width="5" stroke-linecap="round" stroke-linejoin="round"/>
<path d="M868.0 298.0 L864.0 306.0" fill="none" stroke="#213b3d" stroke-width="3" stroke-linecap="round" stroke-linejoin="round"/>
<path d="M913.0 281.0 C913.5 282.8 914.7 288.3 916.0 292.0 C917.3 295.7 920.2 301.2 921.0 303.0" fill="none" stroke="#213b3d" stroke-width="3" stroke-linecap="round" stroke-linejoin="round"/>
<ellipse cx="920" cy="306" rx="7" ry="6" fill="#213b3d"/>
<path d="M914.0 310.0 L906.0 317.0" fill="none" stroke="#213b3d" stroke-width="2.5" stroke-linecap="round" stroke-linejoin="round"/>
<path d="M969.0 309.0 C970.8 308.3 975.5 306.2 980.0 305.0 C984.5 303.8 991.0 302.3 996.0 302.0 C1001.0 301.7 1007.7 302.8 1010.0 303.0" fill="none" stroke="#213b3d" stroke-width="1.5" stroke-linecap="round" stroke-linejoin="round"/>
<ellipse cx="840" cy="401" rx="4" ry="11" fill="#3a5a55"/>
<path d="M953.0 449.0 C961.5 446.0 994.5 446.2 1003.0 448.0 C1011.5 449.8 1006.2 456.8 1004.0 460.0 C1001.8 463.2 994.8 465.2 990.0 467.0 C985.2 468.8 979.7 469.8 975.0 471.0 C970.3 472.2 965.8 474.8 962.0 474.0 C958.2 473.2 953.5 470.2 952.0 466.0 C950.5 461.8 944.5 452.0 953.0 449.0Z" fill="#213b3d"/>
<path d="M968.0 472.0 C967.2 475.0 964.2 484.3 963.0 490.0 C961.8 495.7 961.3 503.3 961.0 506.0" fill="none" stroke="#213b3d" stroke-width="4" stroke-linecap="round" stroke-linejoin="round"/>
<path d="M947.0 512.0 C949.2 509.7 953.8 507.5 958.0 507.0 C962.2 506.5 968.3 507.2 972.0 509.0 C975.7 510.8 979.0 514.5 980.0 518.0 C981.0 521.5 979.7 526.7 978.0 530.0 C976.3 533.3 973.3 536.5 970.0 538.0 C966.7 539.5 961.5 540.2 958.0 539.0 C954.5 537.8 951.2 534.0 949.0 531.0 C946.8 528.0 945.3 524.2 945.0 521.0 C944.7 517.8 944.8 514.3 947.0 512.0Z" fill="#213b3d"/>
<path d="M963.0 538.0 C964.5 540.0 969.5 546.3 972.0 550.0 C974.5 553.7 977.0 558.3 978.0 560.0" fill="none" stroke="#213b3d" stroke-width="4" stroke-linecap="round" stroke-linejoin="round"/>
<path d="M950.0 577.0 C952.0 576.0 957.8 572.2 962.0 571.0 C966.2 569.8 971.3 569.3 975.0 570.0 C978.7 570.7 982.5 574.2 984.0 575.0" fill="none" stroke="#213b3d" stroke-width="5" stroke-linecap="round" stroke-linejoin="round"/>
<path d="M975.0 545.0 C973.8 546.2 970.8 550.7 968.0 552.0 C965.2 553.3 959.7 552.8 958.0 553.0" fill="none" stroke="#213b3d" stroke-width="3" stroke-linecap="round" stroke-linejoin="round"/>
<path d="M1049.0 502.0 C1055.2 498.0 1079.0 497.7 1085.0 502.0 C1091.0 506.3 1088.8 523.5 1085.0 528.0 C1081.2 532.5 1066.8 525.7 1062.0 529.0 C1057.2 532.3 1058.0 545.3 1056.0 548.0 C1054.0 550.7 1051.3 548.7 1050.0 545.0 C1048.7 541.3 1048.2 533.2 1048.0 526.0 C1047.8 518.8 1042.8 506.0 1049.0 502.0Z" fill="#213b3d"/>
<path d="M1109.0 540.0 C1111.2 536.0 1121.2 531.2 1126.0 532.0 C1130.8 532.8 1135.2 540.7 1138.0 545.0 C1140.8 549.3 1144.7 555.0 1143.0 558.0 C1141.3 561.0 1133.0 563.3 1128.0 563.0 C1123.0 562.7 1116.2 559.8 1113.0 556.0 C1109.8 552.2 1106.8 544.0 1109.0 540.0Z" fill="#213b3d"/>
<path d="M1124.0 410.0 C1126.7 407.5 1134.8 405.7 1138.0 407.0 C1141.2 408.3 1142.5 414.2 1143.0 418.0 C1143.5 421.8 1142.5 426.8 1141.0 430.0 C1139.5 433.2 1136.3 436.5 1134.0 437.0 C1131.7 437.5 1129.0 435.5 1127.0 433.0 C1125.0 430.5 1122.5 425.8 1122.0 422.0 C1121.5 418.2 1121.3 412.5 1124.0 410.0Z" fill="#213b3d"/>
<path d="M1146.0 410.0 C1146.5 412.5 1147.8 419.2 1149.0 425.0 C1150.2 430.8 1152.3 441.7 1153.0 445.0" fill="none" stroke="#213b3d" stroke-width="2.5" stroke-linecap="round" stroke-linejoin="round"/>
<path d="M1131.0 436.0 L1132.0 450.0" fill="none" stroke="#213b3d" stroke-width="2.5" stroke-linecap="round" stroke-linejoin="round"/>
<path d="M852.0 484.0 C853.5 484.0 861.0 493.2 864.0 500.0 C867.0 506.8 869.7 517.5 870.0 525.0 C870.3 532.5 868.0 538.2 866.0 545.0 C864.0 551.8 860.3 563.5 858.0 566.0 C855.7 568.5 852.0 564.3 852.0 560.0 C852.0 555.7 856.8 546.7 858.0 540.0 C859.2 533.3 859.5 526.7 859.0 520.0 C858.5 513.3 856.2 506.0 855.0 500.0 C853.8 494.0 850.5 484.0 852.0 484.0Z" fill="#56745a"/>
</g>
<g fill="none" stroke="#cfd6cf" stroke-width="1" stroke-dasharray="1.2 2.4" opacity=".6">
<path d="M1170.0 185.0 C1173.3 187.5 1182.5 196.7 1190.0 200.0 C1197.5 203.3 1207.5 200.8 1215.0 205.0 C1222.5 209.2 1227.5 222.2 1235.0 225.0 C1242.5 227.8 1251.7 225.3 1260.0 222.0 C1268.3 218.7 1276.7 210.3 1285.0 205.0 C1293.3 199.7 1302.0 194.2 1310.0 190.0 C1318.0 185.8 1329.2 181.7 1333.0 180.0"/>
<path d="M1215.0 205.0 C1216.2 210.8 1217.8 230.5 1222.0 240.0 C1226.2 249.5 1237.8 253.7 1240.0 262.0 C1242.2 270.3 1233.3 280.3 1235.0 290.0 C1236.7 299.7 1240.8 315.3 1250.0 320.0 C1259.2 324.7 1278.3 321.3 1290.0 318.0 C1301.7 314.7 1312.8 303.7 1320.0 300.0 C1327.2 296.3 1330.8 296.7 1333.0 296.0"/>
<path d="M1235.0 225.0 C1239.2 229.2 1251.7 243.8 1260.0 250.0 C1268.3 256.2 1278.3 255.3 1285.0 262.0 C1291.7 268.7 1297.5 285.3 1300.0 290.0"/>
<path d="M930.0 290.0 C933.3 291.7 944.7 296.3 950.0 300.0 C955.3 303.7 960.0 310.0 962.0 312.0"/>
<path d="M840.0 448.0 C845.0 446.7 861.7 443.8 870.0 440.0 C878.3 436.2 884.2 428.3 890.0 425.0 C895.8 421.7 902.5 420.8 905.0 420.0"/>
</g>
<g fill="none" stroke="#e6c463" stroke-width="1.25" stroke-linecap="round" stroke-linejoin="round">
<path d="M981.0 166.0 C981.8 169.2 985.5 177.0 985.5 185.0 C985.5 193.0 982.2 206.0 981.0 214.0 C979.8 222.0 978.3 227.2 978.0 233.0 C977.7 238.8 980.3 243.3 979.0 249.0 C977.7 254.7 973.0 261.5 970.0 267.0 C967.0 272.5 962.8 276.8 961.0 282.0 C959.2 287.2 958.6 292.8 959.0 298.0 C959.4 303.2 960.2 308.7 963.5 313.0 C966.8 317.3 975.1 320.3 979.0 324.0 C982.9 327.7 984.4 331.3 986.6 335.0 C988.8 338.7 990.8 341.2 992.0 346.0 C993.2 350.8 994.0 358.5 994.0 364.0 C994.0 369.5 993.0 375.0 992.0 379.0 C991.0 383.0 990.6 384.7 987.7 388.0 C984.8 391.3 977.8 394.2 974.5 399.0 C971.2 403.8 970.9 411.2 968.0 417.0 C965.1 422.8 960.0 428.8 957.0 434.0 C954.0 439.2 951.5 443.7 950.0 448.0 C948.5 452.3 948.5 456.3 948.0 460.0 C947.5 463.7 947.2 468.3 947.0 470.0"/>
<path d="M1026.0 196.0 C1024.8 198.6 1022.3 207.5 1018.5 211.5 C1014.7 215.5 1007.1 216.3 1003.0 220.0 C998.9 223.7 998.0 228.7 994.0 233.5 C990.0 238.3 981.5 246.4 979.0 249.0"/>
<path d="M871.0 350.0 C872.8 352.3 878.3 358.8 882.0 364.0 C885.7 369.2 890.1 377.8 893.0 381.0 C895.9 384.2 895.6 382.2 899.6 383.0 C903.6 383.8 910.8 386.0 917.0 385.7 C923.2 385.4 932.2 383.0 937.0 381.0 C941.8 379.0 942.7 373.6 946.0 373.6 C949.3 373.6 950.0 379.7 957.0 381.0 C964.0 382.3 982.6 381.2 987.7 381.3"/>
<path d="M901.8 383.5 C902.0 386.8 901.2 397.9 903.0 403.0 C904.8 408.1 909.3 410.3 912.8 414.0 C916.3 417.7 917.6 422.7 923.8 425.0 C930.0 427.3 943.0 427.6 950.0 427.6 C957.0 427.6 963.1 425.4 965.7 425.0"/>
<path d="M862.0 474.0 C865.0 474.0 870.8 473.7 880.0 474.0 C889.2 474.3 907.5 476.2 917.0 476.0 C926.5 475.8 931.8 474.1 937.0 473.0 C942.2 471.9 946.2 470.2 948.0 469.6"/>
<path d="M938.0 474.0 C938.0 477.7 938.9 488.7 938.0 496.0 C937.1 503.3 933.7 510.7 932.6 518.0 C931.5 525.3 931.3 532.7 931.5 540.0 C931.7 547.3 934.1 556.5 933.7 562.0 C933.3 567.5 928.5 567.8 929.0 573.0 C929.5 578.2 933.1 584.9 936.6 593.0 C940.1 601.1 944.7 612.3 949.8 621.5 C954.9 630.7 963.4 641.8 967.4 648.0 C971.4 654.2 972.9 657.2 974.0 659.0"/>
<path d="M912.8 442.0 C914.3 442.6 916.1 444.6 921.6 445.4 C927.1 446.1 941.9 446.3 946.0 446.5"/>
<path d="M948.0 469.6 C950.2 470.0 955.8 469.8 961.0 472.0 C966.2 474.2 973.5 479.9 979.0 483.0 C984.5 486.1 987.2 488.4 994.0 490.6 C1000.8 492.8 1010.9 494.5 1019.6 496.0 C1028.3 497.5 1040.5 498.1 1046.0 499.4 C1051.5 500.7 1048.3 504.0 1052.7 503.8 C1057.1 503.6 1065.5 500.0 1072.5 498.0 C1079.5 496.0 1089.0 493.9 1094.5 491.7 C1100.0 489.5 1097.4 486.4 1105.5 485.0 C1113.6 483.6 1134.2 483.9 1143.0 483.0 C1151.8 482.1 1154.7 482.2 1158.4 479.6 C1162.1 477.0 1162.4 471.3 1165.0 467.4 C1167.6 463.5 1169.4 458.6 1173.8 456.4 C1178.2 454.2 1188.5 454.4 1191.5 454.0"/>
<path d="M1019.6 496.0 C1020.7 499.7 1024.0 511.2 1026.0 518.0 C1028.0 524.8 1030.8 533.7 1031.8 536.8"/>
<path d="M1090.0 451.0 C1093.7 451.3 1105.4 452.5 1112.0 453.0 C1118.6 453.5 1122.8 453.7 1129.8 454.0 C1136.8 454.3 1146.7 455.2 1154.0 455.0 C1161.3 454.8 1170.5 453.3 1173.8 453.0"/>
<path d="M1112.0 430.0 C1112.8 432.2 1113.6 439.0 1116.6 443.0 C1119.6 447.0 1127.6 452.2 1129.8 454.0"/>
<path d="M1158.4 479.6 C1156.9 482.3 1152.2 489.6 1149.6 496.0 C1147.0 502.4 1144.1 512.2 1143.0 518.0 C1141.9 523.8 1142.3 525.8 1143.0 531.0 C1143.7 536.2 1147.5 544.2 1147.4 549.0 C1147.3 553.8 1144.9 556.7 1142.6 560.0 C1140.3 563.3 1137.4 566.3 1133.8 568.8 C1130.2 571.3 1125.5 573.4 1120.7 575.0 C1115.9 576.6 1108.7 576.4 1105.0 578.7 C1101.3 581.0 1100.4 585.9 1098.7 588.6 C1097.0 591.3 1095.6 593.9 1095.0 595.0"/>
<path d="M1145.0 148.7 C1146.1 151.1 1150.3 157.3 1151.8 163.0 C1153.3 168.7 1152.2 177.5 1154.0 183.0 C1155.8 188.5 1160.6 190.2 1162.8 196.0 C1165.0 201.8 1165.2 210.7 1167.0 218.0 C1168.8 225.3 1171.2 233.0 1173.8 240.0 C1176.4 247.0 1178.2 253.7 1182.6 260.0 C1187.0 266.3 1195.9 273.9 1200.0 277.6 C1204.1 281.3 1204.0 279.4 1207.0 282.0 C1210.0 284.6 1215.1 287.1 1218.0 293.0 C1220.9 298.9 1223.4 308.6 1224.5 317.4 C1225.6 326.2 1225.6 336.1 1224.5 346.0 C1223.4 355.9 1220.2 368.9 1218.0 377.0 C1215.8 385.1 1212.7 391.0 1211.0 394.5 C1209.3 398.0 1207.5 395.4 1208.0 398.0 C1208.5 400.6 1211.7 405.3 1214.0 410.0 C1216.3 414.7 1219.3 421.2 1222.0 426.0 C1224.7 430.8 1227.8 435.3 1230.0 439.0 C1232.2 442.7 1234.7 444.8 1235.0 448.0 C1235.3 451.2 1233.2 455.7 1232.0 458.0 C1230.8 460.3 1228.7 461.3 1228.0 462.0"/>
<path d="M1145.0 148.7 C1146.8 149.2 1148.2 150.9 1156.0 152.0 C1163.8 153.1 1180.5 155.9 1191.5 155.0 C1202.5 154.1 1213.9 149.6 1222.0 146.5 C1230.1 143.4 1235.5 139.0 1240.0 136.6 C1244.5 134.2 1244.4 132.6 1248.7 132.0 C1253.0 131.4 1263.1 132.8 1266.0 133.0"/>
<path d="M1323.0 139.0 C1322.3 144.7 1320.3 158.5 1319.0 173.0 C1317.7 187.5 1316.5 211.5 1315.0 226.0 C1313.5 240.5 1313.0 248.5 1310.0 260.0 C1307.0 271.5 1301.3 284.8 1297.0 295.0 C1292.7 305.2 1288.5 313.0 1284.0 321.0 C1279.5 329.0 1274.8 336.2 1270.0 343.0 C1265.2 349.8 1260.0 357.2 1255.0 362.0 C1250.0 366.8 1245.5 368.3 1240.0 372.0 C1234.5 375.7 1226.8 380.2 1222.0 384.0 C1217.2 387.8 1212.8 393.2 1211.0 395.0"/>
<path d="M1226.0 452.0 C1227.8 450.8 1233.0 447.7 1237.0 445.0 C1241.0 442.3 1245.8 438.3 1250.0 436.0 C1254.2 433.7 1260.0 431.8 1262.0 431.0"/>
<path d="M1226.0 455.0 C1226.3 457.5 1228.3 465.8 1228.0 470.0 C1227.7 474.2 1224.7 478.3 1224.0 480.0"/>
<path d="M1068.0 553.0 L1078.0 556.0"/>
<path d="M1067.0 636.0 C1065.7 636.7 1061.0 638.0 1059.0 640.0 C1057.0 642.0 1055.0 644.7 1054.7 648.0 C1054.4 651.3 1056.6 658.0 1057.0 660.0"/>
<path d="M960.8 645.7 C962.6 645.2 966.3 642.9 971.8 642.4 C977.3 641.9 990.1 642.9 993.7 643.0"/>
<path d="M990.0 644.0 C989.5 644.5 988.2 644.8 987.0 647.0 C985.8 649.2 983.4 655.3 982.7 657.0"/>
<path d="M897.0 641.0 C898.1 642.5 902.1 646.8 903.6 650.0 C905.1 653.2 905.4 658.3 905.8 660.0"/>
<path d="M952.0 643.5 L956.4 657.0"/>
<path d="M1235.0 645.0 C1235.8 646.7 1238.7 652.2 1240.0 655.0 C1241.3 657.8 1242.5 660.8 1243.0 662.0"/>
<path d="M873.0 478.0 C874.2 478.7 878.0 479.7 880.0 482.0 C882.0 484.3 884.2 490.3 885.0 492.0"/>
<path d="M860.0 452.0 C860.3 453.7 861.8 458.3 862.0 462.0 C862.2 465.7 861.2 472.0 861.0 474.0"/>
<path d="M895.0 290.0 C895.8 291.7 898.3 296.3 900.0 300.0 C901.7 303.7 904.2 310.0 905.0 312.0"/>
<path d="M882.0 280.0 L890.0 286.0"/>
<path d="M940.0 345.0 C941.3 345.8 946.0 347.8 948.0 350.0 C950.0 352.2 951.3 356.7 952.0 358.0"/>
<path d="M1290.0 392.0 C1291.0 392.7 1294.3 394.3 1296.0 396.0 C1297.7 397.7 1299.3 401.0 1300.0 402.0"/>
<path d="M1107.0 412.0 C1108.1 413.8 1112.3 418.6 1113.5 423.0 C1114.7 427.4 1111.9 434.0 1114.0 438.7 C1116.1 443.4 1124.0 448.9 1126.0 451.0"/>
<path d="M1167.0 402.5 C1167.0 403.8 1165.4 405.6 1167.0 410.0 C1168.6 414.4 1174.1 423.7 1176.4 429.0 C1178.7 434.3 1179.4 438.5 1181.0 441.8 C1182.6 445.1 1185.2 447.8 1186.0 449.0"/>
<path d="M1168.6 410.0 C1170.2 410.6 1175.1 411.7 1178.0 413.5 C1180.9 415.3 1183.8 417.6 1185.9 421.0 C1188.0 424.4 1189.8 430.3 1190.6 434.0 C1191.4 437.7 1190.6 441.5 1190.6 443.0"/>
<path d="M1191.4 401.7 C1190.5 402.9 1186.8 405.6 1185.9 408.8 C1185.0 412.0 1185.9 419.0 1185.9 421.0"/>
<path d="M932.6 547.5 L940.0 547.0"/>
<path d="M932.6 554.5 C935.5 554.5 944.9 553.8 950.0 554.5 C955.1 555.2 961.2 558.2 963.5 559.0"/>
<path d="M890.8 552.0 L894.0 558.0"/>
</g>
<path d="M873.0 559.0 C875.0 559.5 880.5 561.3 885.0 562.0 C889.5 562.7 895.0 562.2 900.0 563.0 C905.0 563.8 910.8 565.2 915.0 567.0 C919.2 568.8 922.2 572.7 925.0 574.0 C927.8 575.3 930.2 575.7 932.0 575.0 C933.8 574.3 935.3 570.8 936.0 570.0" fill="none" stroke="#c9d2cf" stroke-width="1.2"/>
<g fill="#fff" stroke="#222" stroke-width=".6">
<circle cx="1323" cy="137.5" r="2"/>
<circle cx="1035" cy="146" r="1.5"/>
<circle cx="981" cy="166.5" r="1.5"/>
<circle cx="1026" cy="189" r="1.5"/>
<circle cx="979" cy="248.5" r="2.2"/>
<circle cx="860" cy="249" r="1.5"/>
<circle cx="877" cy="262" r="1.5"/>
<circle cx="934" cy="337" r="1.5"/>
<circle cx="987" cy="335" r="2"/>
<circle cx="871" cy="350" r="1.5"/>
<circle cx="899.5" cy="383" r="1.6"/>
<circle cx="992" cy="379" r="2.2"/>
<circle cx="841" cy="391" r="1.5"/>
<circle cx="831" cy="402" r="1.5"/>
<circle cx="912" cy="442" r="1.4"/>
<circle cx="946" cy="445.5" r="1.6"/>
<circle cx="858" cy="480" r="1.7"/>
<circle cx="940.5" cy="476.5" r="1.6"/>
<circle cx="1016.5" cy="489.5" r="1.8"/>
<circle cx="938.5" cy="574.5" r="1.6"/>
<circle cx="907" cy="620" r="1.4"/>
<circle cx="948" cy="615" r="1.4"/>
<circle cx="994.5" cy="642.5" r="1.8"/>
<circle cx="1077" cy="624" r="1.4"/>
<circle cx="1235" cy="644.5" r="1.6"/>
<circle cx="1145" cy="148.5" r="2.3"/>
<circle cx="1223" cy="146.5" r="1.6"/>
<circle cx="1153" cy="182" r="1.5"/>
<circle cx="1167" cy="239" r="1.5"/>
<circle cx="1314" cy="226" r="1.5"/>
<circle cx="1216" cy="304" r="1.6"/>
<circle cx="1204" cy="396" r="2"/>
<circle cx="1322" cy="400" r="1.5"/>
<circle cx="1193" cy="450" r="2.3"/>
<circle cx="1244" cy="446.5" r="1.6"/>
<circle cx="1229" cy="460.5" r="2.3"/>
<circle cx="1154" cy="455" r="1.6"/>
<circle cx="1094.5" cy="490" r="1.6"/>
<circle cx="1295.5" cy="485.5" r="1.5"/>
</g>
<g font-family="&quot;Liberation Sans&quot;,sans-serif" text-anchor="middle" fill="#fff" letter-spacing="-.15" stroke="#1a1a1a" stroke-width="2.4" stroke-linejoin="round" paint-order="stroke" style="paint-order:stroke fill">
<text x="1031" y="142.5" font-size="9.7" >Skagen</text>
<text x="981" y="163" font-size="9.7" >Hirtshals</text>
<text x="1027" y="185" font-size="9.7" >Frederikshavn</text>
<text x="992" y="204" font-size="9.7" >Vendsyssel</text>
<text x="978" y="244" font-size="12.3" >Aalborg</text>
<text x="861" y="246" font-size="9.7" >Klitmøller</text>
<text x="878" y="272" font-size="9.7" >Thisted</text>
<text x="935" y="332" font-size="11.2" >Viborg</text>
<text x="987" y="332" font-size="12.3" >Randers</text>
<text x="871" y="346" font-size="11.2" >Holstebro</text>
<text x="1001" y="376" font-size="12.3" >Aarhus</text>
<text x="900" y="379" font-size="11.2" >Herning</text>
<text x="841" y="387" font-size="9.7" >Ringkøbing</text>
<text x="831" y="413" font-size="9.7" >Hvide Sande</text>
<text x="911" y="440" font-size="9.7" >Billund</text>
<text x="946" y="441" font-size="11.2" >Vejle</text>
<text x="992" y="468" font-size="15.5" font-weight="bold" letter-spacing="1.4">Danmark</text>
<text x="858" y="474" font-size="11.2" >Esbjerg</text>
<text x="940" y="490" font-size="11.2" >Kolding</text>
<text x="1017" y="485" font-size="11.2" >Odense</text>
<text x="1003" y="504" font-size="9.7" >Fyn</text>
<text x="862" y="512" font-size="11.5" fill="#8fdc9a">Nationalpark</text>
<text x="862" y="524" font-size="11.5" fill="#8fdc9a">Vadehavet</text>
<text x="938" y="591" font-size="12.3" >Flensborg</text>
<text x="906" y="616" font-size="9.7" >Husum</text>
<text x="948" y="610" font-size="9.7" >Slesvig by</text>
<text x="994" y="637" font-size="12.3" >Kiel</text>
<text x="1077" y="620" font-size="9.7" >Femern</text>
<text x="1234" y="640" font-size="11.2" >Stralsund</text>
<text x="1145" y="142" font-size="13.8" >Göteborg</text>
<text x="1316" y="133.5" font-size="12.3" >Jönköping</text>
<text x="1223" y="142" font-size="11.2" >Borås</text>
<text x="1153" y="178" font-size="11.2" >Kungsbacka</text>
<text x="1168" y="236" font-size="11.2" >Varberg</text>
<text x="1314" y="224" font-size="9.7" >Värnamo</text>
<text x="1216" y="300" font-size="11.2" >Halmstad</text>
<text x="1204" y="392" font-size="12.3" >Helsingborg</text>
<text x="1322" y="396" font-size="11.2" >Kristianstad</text>
<text x="1194" y="444" font-size="12.3" font-weight="bold">København</text>
<text x="1244" y="441" font-size="11.2" >Lund</text>
<text x="1154" y="468" font-size="11.2" >Roskilde</text>
<text x="1229" y="476" font-size="12.8" font-weight="bold">Malmø</text>
<text x="1124" y="485" font-size="11.2" >Sjælland</text>
<text x="1094" y="503" font-size="11.2" >Slagelse</text>
<text x="1296" y="483" font-size="9.7" >Ystad</text>
</g>
<g transform="translate(962.8 394.8)"><path d="M0 0.4 C-0.3 -5.5 -1.8 -8.5 -4.4 -12 C-6.2 -14.4 -7.4 -16.6 -7.4 -19.8 A7.4 7.4 0 1 1 7.4 -19.8 C7.4 -16.6 6.2 -14.4 4.4 -12 C1.8 -8.5 0.3 -5.5 0 0.4Z" fill="#fb7265" stroke="#1a0d0a" stroke-width=".9" stroke-linejoin="round"/><circle cx="0" cy="-19.9" r="2.4" fill="#080808"/></g>
<g transform="translate(997.6 405.8)"><path d="M0 0.4 C-0.3 -5.5 -1.8 -8.5 -4.4 -12 C-6.2 -14.4 -7.4 -16.6 -7.4 -19.8 A7.4 7.4 0 1 1 7.4 -19.8 C7.4 -16.6 6.2 -14.4 4.4 -12 C1.8 -8.5 0.3 -5.5 0 0.4Z" fill="#6993fb" stroke="#0a0d1a" stroke-width=".9" stroke-linejoin="round"/><circle cx="0" cy="-19.9" r="2.4" fill="#080808"/></g>
<g transform="translate(936.6 471)"><path d="M0 0.4 C-0.3 -5.5 -1.8 -8.5 -4.4 -12 C-6.2 -14.4 -7.4 -16.6 -7.4 -19.8 A7.4 7.4 0 1 1 7.4 -19.8 C7.4 -16.6 6.2 -14.4 4.4 -12 C1.8 -8.5 0.3 -5.5 0 0.4Z" fill="#fbf263" stroke="#1a1a0a" stroke-width=".9" stroke-linejoin="round"/><circle cx="0" cy="-19.9" r="2.4" fill="#080808"/></g>
</svg>
<div class="ctl" style="left:9px;top:9px;width:141px;height:36px;font-family:'Liberation Sans',sans-serif;font-size:16px;line-height:36px">
<div style="position:absolute;left:0;top:0;width:61px;text-align:center;color:#565656">Kort</div>
<div style="position:absolute;left:60px;top:2px;width:1px;height:32px;background:#e9e9e9"></div>
<div style="position:absolute;left:62px;top:0;width:79px;text-align:center;color:#000;font-weight:bold;letter-spacing:-.3px">Satellit</div>
</div>
<div class="ctl" style="left:557px;top:9px;width:36px;height:36px"><svg width="36" height="36" viewBox="0 0 36 36"><path d="M11 16.4 V11 H16.4 M20 11 H25.4 V16.4 M25.4 20 V25.2 H20 M16.4 25.2 H11 V20" fill="none" stroke="#666" stroke-width="2"/></svg></div>
<div class="ctl" style="left:557px;top:379px;width:36px;height:35px"><svg width="36" height="35" viewBox="0 0 36 35">
<path d="M12.9 13.5 Q13.2 13 14 13 H20.6 Q21.5 13 21.8 13.7 L24.5 21.6 Q24.7 22.6 23.8 22.7 Q23 22.8 22.7 22 L20.9 17.5 V29.2 Q20.9 29.8 20.3 29.8 H18 V23.3 H16.7 V29.8 H14.4 Q13.8 29.8 13.8 29.2 V17.5 L12 22 Q11.7 22.8 10.9 22.7 Q10.1 22.5 10.3 21.6Z" fill="#fbbc24" stroke="#d59322" stroke-width=".5"/>
<path d="M14.8 13.3 H20.1 L17.4 17.8Z" fill="#e8852a"/>
<circle cx="17.3" cy="8.7" r="4.3" fill="#fbbc24" stroke="#d59322" stroke-width=".5"/>
</svg></div>
<div class="ctl" style="left:557px;top:443px;width:36px;height:73px"><svg width="36" height="73" viewBox="0 0 36 73">
<path d="M18 10.3 V26.3 M10 18.3 H26 M10 54.8 H26" stroke="#666" stroke-width="3.1" fill="none"/>
<rect x="5" y="36" width="26" height="1" fill="#e6e6e6"/></svg></div>
<svg style="position:absolute;left:4px;top:513px" width="62" height="24" viewBox="0 0 62 24"><text x="1" y="17.5" font-family="'Liberation Sans',sans-serif" font-size="19" fill="#fff" stroke="#fff" stroke-width=".35" letter-spacing="-.8">Google</text></svg>
<div style="position:absolute;left:67px;top:525px;width:535px;height:12px;background:rgba(245,245,245,.72);font-family:'Liberation Sans',sans-serif;font-size:9.5px;letter-spacing:-.29px;line-height:12.5px;color:#444;white-space:nowrap">
<span style="position:absolute;left:4px;top:0">Kortdata ©2019 GeoBasis-DE/BKG (©2009), Google Billedmateriale ©2019 TerraMetrics</span>
<span style="position:absolute;left:359px;top:1px;width:1px;height:11px;background:#555"></span>
<span style="position:absolute;left:364px;top:0">Servicevilkår</span>
<span style="position:absolute;left:420px;top:1px;width:1px;height:11px;background:#555"></span>
<span style="position:absolute;left:425px;top:0">Rapporter en fejl på kortet</span>
</div>

</div>

</body>
</html>
